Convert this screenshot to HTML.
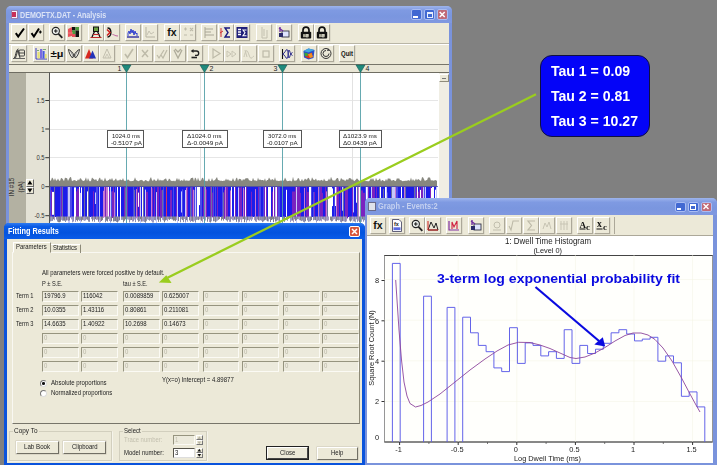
<!DOCTYPE html>
<html><head><meta charset="utf-8"><title>Fitting Results</title>
<style>
html,body{margin:0;padding:0;background:#808080;}
body{width:717px;height:465px;overflow:hidden;background:#808080;font-family:"Liberation Sans",sans-serif;font-size:8px;color:#000;position:relative;}
div,span{position:absolute;box-sizing:border-box;white-space:nowrap;}
svg{position:absolute;left:0;top:0;overflow:visible;}
svg text{font-family:"Liberation Sans",sans-serif;}
.tb{height:17px;width:16px;background:#ece9d8;border:1px solid;border-color:#fff #aca899 #aca899 #fff;font-size:9px;text-align:center;line-height:15px;overflow:hidden;box-shadow:0.5px 0.5px 0 #d0cdbd;}
.tb svg{left:0;top:0;width:14px;height:15px;}
.fld{height:11px;width:37px;background:#eceadc;border:1px solid;border-color:#96947f #fbfaf4 #fbfaf4 #96947f;font-size:7.4px;line-height:9px;padding-left:2px;color:#333;}
.fld.d{color:#b4b1a0;}
.btn{background:#ece9d8;border:1px solid;border-color:#fff #716f64 #716f64 #fff;font-size:7.4px;text-align:center;color:#111;box-shadow:0 0 0 0.5px #c9c6b5;}
.t{font-size:7.4px;color:#222;line-height:9px;}
.cb{background:#fff;border:1px solid #222;font-size:7.4px;line-height:8.2px;text-align:center;color:#222;padding-top:1px;}
.wb{width:10.5px;height:10.5px;border-radius:2px;border:1px solid #a9bcf2;}
</style></head><body><div id="root" style="left:0;top:0;width:735px;height:485px;overflow:hidden;filter:blur(0.4px);">
<div style="left:5.5px;top:5.9px;width:446.0px;height:240px;background:#7a93dc;border-radius:5px 5px 0 0;"></div><div style="left:5.5px;top:5.9px;width:446.0px;height:17px;background:linear-gradient(#9db4ec,#7f9ae2 25%,#7a96df 60%,#8098e0);border-radius:5px 5px 0 0;"></div><div style="left:10.8px;top:10.3px;width:7.5px;height:8.5px;background:#f4f2fa;border:1px solid #9a80b0;"></div><div style="left:12px;top:12px;width:3.5px;height:5px;background:#c83058;"></div><span style="left:19.8px;top:9.5px;font-size:9.2px;line-height:11.0px;font-weight:bold;color:#dbe3f6;transform-origin:0 50%;transform:scaleX(0.774);">DEMOFTX.DAT - Analysis</span><div class="wb" style="left:411px;top:9.2px;background:#4168d2;"></div><div class="wb" style="left:424px;top:9.2px;background:#4168d2;"></div><div class="wb" style="left:437px;top:9.2px;background:#c06a78;"></div><div style="left:413px;top:15.5px;width:4.5px;height:2px;background:#fff;"></div><div style="left:426.5px;top:11.5px;width:6px;height:6px;border:1px solid #e8eefc;border-top-width:2px;"></div><svg width="717" height="465"><path d="M439.7 12l5 5M444.7 12l-5 5" stroke="#fff" stroke-width="1.5"/></svg><div style="left:8.5px;top:22.5px;width:440.5px;height:223px;background:#ece9d8;"></div><div style="left:8.5px;top:42.6px;width:440.5px;height:1px;background:#b9b6a6;"></div><div style="left:8.5px;top:43.6px;width:440.5px;height:1px;background:#fff;"></div><div style="left:8.5px;top:63.5px;width:440.5px;height:1px;background:#77756a;"></div><div class="tb" style="left:11px;top:24px;width:16px;"><svg viewBox="0 0 14 15"><path d="M3.800 8.200l2.400 3.300L12 3.500" fill="none" stroke="#000" stroke-width="2"/></svg></div><div class="tb" style="left:28px;top:24px;width:16px;"><svg viewBox="0 0 14 15"><path d="M2.500 8.200l2.400 3.300L10 3.500" fill="none" stroke="#000" stroke-width="2"/><path d="M11.300 5.500v3M9.800 7h3" stroke="#000" stroke-width="1.200"/></svg></div><div class="tb" style="left:49px;top:24px;width:16px;"><svg viewBox="0 0 14 15"><circle cx="5.800" cy="6" r="3.600" fill="#f2f6f2" stroke="#222" stroke-width="1.100"/><path d="M8.500 8.800l3.800 4" stroke="#222" stroke-width="1.900"/><path d="M4 6h3.600M5.800 4.200v3.600" stroke="#111" stroke-width="1"/></svg></div><div class="tb" style="left:66px;top:24px;width:16px;"><svg viewBox="0 0 14 15"><path d="M1 4l4-2v9l-4 1z" fill="#e8505a"/><rect x="5" y="2" width="3.500" height="3.500" fill="#111"/><rect x="8.500" y="2" width="3.500" height="3.500" fill="#4a9a3a"/><rect x="5" y="5.500" width="3.500" height="3.500" fill="#4a9a3a"/><rect x="8.500" y="5.500" width="3.500" height="3.500" fill="#111"/><rect x="5" y="9" width="3.500" height="3" fill="#e8505a"/><rect x="8.500" y="9" width="3.500" height="3" fill="#111"/><path d="M1 8h5" stroke="#f08080" stroke-width="1"/></svg></div><div class="tb" style="left:87.5px;top:24px;width:16px;"><svg viewBox="0 0 14 15"><rect x="4.500" y="2" width="5" height="4.500" fill="#6aa040" stroke="#111" stroke-width="1"/><path d="M5.500 6.500L3 12M8.500 6.500L11 12" stroke="#111" stroke-width="1.300" fill="none"/><path d="M1.500 12.500h11M4 9.500h6" stroke="#c02828" stroke-width="1.200"/></svg></div><div class="tb" style="left:103.8px;top:24px;width:16px;"><svg viewBox="0 0 14 15"><path d="M2.500 3c4.500 0 4.500 9 0 9" fill="none" stroke="#111" stroke-width="1.400"/><path d="M2 4.500l3 3-3 3" fill="none" stroke="#d02020" stroke-width="1.500"/><path d="M7.500 9.500c2 0 2 1.500 5.500 1.500" stroke="#c060a0" stroke-width="1" fill="none"/></svg></div><div class="tb" style="left:125px;top:24px;width:16px;"><svg viewBox="0 0 14 15"><path d="M1 12h12" stroke="#2020a0" stroke-width="1.3"/><path d="M2 11V8l1-2 1 3 1-5 1 4 1-3 1 5 1-4 1 3 1-1v3" fill="none" stroke="#3040d0" stroke-width="1"/></svg></div><div class="tb" style="left:142px;top:24px;width:16px;"><svg viewBox="0 0 14 15"><path d="M3 2v10h9" stroke="#b5b2a2" stroke-width="1" fill="none"/><path d="M4 10l2-4 2 3 3-2" fill="none" stroke="#c5c2b2" stroke-width="1"/></svg></div><div class="tb" style="left:163.5px;top:24px;width:16px;"><svg viewBox="0 0 14 15"><text x="2.200" y="10.800" font-size="10" font-weight="bold" fill="#111" textLength="9.400" lengthAdjust="spacingAndGlyphs">fx</text></svg></div><div class="tb" style="left:180px;top:24px;width:16px;"><svg viewBox="0 0 14 15"><path d="M3 4h3M4.5 2.5v3M9 3l3 3M12 3l-3 3M3 10h3M9 10h3" stroke="#bebbaa" stroke-width="1.1"/></svg></div><div class="tb" style="left:201px;top:24px;width:16px;"><svg viewBox="0 0 14 15"><path d="M3 2v11M3 4h8M3 7h6M3 10h9" stroke="#a9a696" stroke-width="1"/></svg></div><div class="tb" style="left:218px;top:24px;width:16px;"><svg viewBox="0 0 14 15"><path d="M2 3v9" stroke="#d03030" stroke-width="1"/><path d="M11 3H6l3 4.5L6 12h5" fill="none" stroke="#1a1a80" stroke-width="1.4"/><path d="M1 8l3-2" stroke="#d03030" stroke-width="1"/></svg></div><div class="tb" style="left:234.3px;top:24px;width:16px;"><svg viewBox="0 0 14 15"><rect x="1.5" y="2" width="11" height="11" fill="#20207a"/><path d="M3 4.500h3M3 7h3M3 9.500h3" stroke="#fff" stroke-width="1.4"/><path d="M11.5 5H8l2 2.800L8 10.800h3.500" fill="none" stroke="#fff" stroke-width="1.1"/></svg></div><div class="tb" style="left:255.5px;top:24px;width:16px;"><svg viewBox="0 0 14 15"><path d="M5 2v11h5V5M7 4v7" stroke="#c2bfae" stroke-width="1" fill="none"/></svg></div><div class="tb" style="left:276.3px;top:24px;width:16px;"><svg viewBox="0 0 14 15"><rect x="5" y="6" width="7" height="6" fill="#dfe4ff" stroke="#334" stroke-width="0.9"/><path d="M2 3l4 3M3 2v5" stroke="#7030a0" stroke-width="1.4"/><rect x="2" y="8" width="4" height="4" fill="#2a2a6a"/></svg></div><div class="tb" style="left:297.5px;top:24px;width:16px;"><svg viewBox="0 0 14 15"><path d="M4 7V5.2a3 3 0 016 0V7" fill="none" stroke="#111" stroke-width="1.7"/><rect x="1.8" y="6.8" width="10.4" height="6.8" rx="1" fill="#111"/><rect x="4" y="9" width="6" height="3.2" fill="#8a8878"/><path d="M5 9.5v2.4M7 9.5h2v1.2h-2v1.2h2" stroke="#e8e6d8" stroke-width="0.7" fill="none"/></svg></div><div class="tb" style="left:314.3px;top:24px;width:16px;"><svg viewBox="0 0 14 15"><path d="M4 7V5.2a3 3 0 016 0V7" fill="none" stroke="#111" stroke-width="1.7"/><rect x="1.8" y="6.8" width="10.4" height="6.8" rx="1" fill="#111"/><rect x="4" y="9" width="6" height="3.2" fill="#8a8878"/><path d="M5 9.5v2.4M7 9.5h2v1.2h-2v1.2h2" stroke="#e8e6d8" stroke-width="0.7" fill="none"/></svg></div><div class="tb" style="left:11px;top:45px;width:16px;"><svg viewBox="0 0 14 15"><path d="M1.500 12.500c2.500 0 2-9.500 5-9.500" fill="none" stroke="#333" stroke-width="1"/><path d="M1 12.500h12" stroke="#555" stroke-width="0.900"/><rect x="7" y="4" width="5.500" height="6" rx="1" fill="none" stroke="#333" stroke-width="0.900"/><path d="M7 7h5" stroke="#333" stroke-width="0.900"/><path d="M3.500 12l2.500-8 2 8" fill="none" stroke="#333" stroke-width="0.900"/></svg></div><div class="tb" style="left:32.7px;top:45px;width:16px;"><svg viewBox="0 0 14 15"><path d="M2 2v11h11" fill="none" stroke="#3a3ac0" stroke-width="1"/><rect x="3.500" y="6" width="2.200" height="6.500" fill="#e4e070"/><rect x="6" y="3" width="2.400" height="9.500" fill="#7a6ae0"/><rect x="8.600" y="5" width="2" height="7.500" fill="#4a5ae0"/><rect x="10.800" y="8" width="1.800" height="4.500" fill="#e4e070"/><path d="M3 4.500h2M9 3.500h3" stroke="#5a9a5a" stroke-width="0.800"/></svg></div><div class="tb" style="left:49px;top:45px;width:16px;"><svg viewBox="0 0 14 15"><text x="0.5" y="10.5" font-size="9.5" font-weight="bold" fill="#111" textLength="13" lengthAdjust="spacingAndGlyphs">±µ</text></svg></div><div class="tb" style="left:66px;top:45px;width:16px;"><svg viewBox="0 0 14 15"><path d="M1.500 3.500c2 .5 4 3 5.500 5.500 1.500-2.500 3.500-5 5.500-5.500-.5 3-1.500 6-4 8.500L7 9l-1.500 3C3 9.500 2 6.500 1.500 3.500z" fill="#f6f6ee" stroke="#222" stroke-width="0.900"/><path d="M3.500 5l3 6M10.500 5l-3 6" stroke="#444" stroke-width="0.600"/></svg></div><div class="tb" style="left:82.5px;top:45px;width:16px;"><svg viewBox="0 0 14 15"><path d="M1 12.500l4-9.500 4 9.500z" fill="#d82a20"/><path d="M5 12.500l3.500-8 3.500 8z" fill="#2232b8"/></svg></div><div class="tb" style="left:99px;top:45px;width:16px;"><svg viewBox="0 0 14 15"><path d="M3 12l4-9 4 9z" fill="none" stroke="#c2bfae" stroke-width="1"/><path d="M5 12l2-4 2 4" fill="none" stroke="#c2bfae" stroke-width="0.8"/></svg></div><div class="tb" style="left:120.5px;top:45px;width:16px;"><svg viewBox="0 0 14 15"><path d="M3 8l2.5 3.5L11 3" fill="none" stroke="#bdbaa8" stroke-width="1.6"/></svg></div><div class="tb" style="left:137px;top:45px;width:16px;"><svg viewBox="0 0 14 15"><path d="M4 4l6 7M10 4l-6 7" fill="none" stroke="#bdbaa8" stroke-width="1.4"/></svg></div><div class="tb" style="left:153.5px;top:45px;width:16px;"><svg viewBox="0 0 14 15"><path d="M2 9l2 3 5-8M6 9l2 3 4-8" fill="none" stroke="#bdbaa8" stroke-width="1.2"/></svg></div><div class="tb" style="left:170px;top:45px;width:16px;"><svg viewBox="0 0 14 15"><path d="M3 4l4 8 4-8M4 3l3 3 3-3" fill="none" stroke="#aeab9a" stroke-width="1.3"/></svg></div><div class="tb" style="left:187px;top:45px;width:16px;"><svg viewBox="0 0 14 15"><path d="M5 5h3.500a2.200 2.200 0 010 4.400H7" fill="none" stroke="#222" stroke-width="1.3"/><path d="M3.500 11.500h5.500" stroke="#222" stroke-width="1.600"/><path d="M5.500 3l-2.800 2 2.800 2z" fill="#222"/></svg></div><div class="tb" style="left:207.5px;top:45px;width:16px;"><svg viewBox="0 0 14 15"><path d="M4 3l7 4.5L4 12z" fill="none" stroke="#bdbaa8" stroke-width="1.2"/></svg></div><div class="tb" style="left:224px;top:45px;width:16px;"><svg viewBox="0 0 14 15"><path d="M2 5l4 3-4 3zM7 5l4 3-4 3z" fill="none" stroke="#c8c5b4" stroke-width="1"/></svg></div><div class="tb" style="left:241.2px;top:45px;width:16px;"><svg viewBox="0 0 14 15"><path d="M2 11c2-8 3-8 5-2s3 2 5 1M3 4l2 7" fill="none" stroke="#c8c5b4" stroke-width="1"/></svg></div><div class="tb" style="left:258px;top:45px;width:16px;"><svg viewBox="0 0 14 15"><rect x="4" y="5" width="6" height="6" fill="none" stroke="#bdbaa8" stroke-width="1.2"/></svg></div><div class="tb" style="left:279.4px;top:45px;width:16px;"><svg viewBox="0 0 14 15"><path d="M2.5 3v10" stroke="#111" stroke-width="1.1"/><path d="M2.5 8c3-1 3-4.5 4.5-4.5S8 12 9 12s1-5 3.5-5.5M2.5 8c3 1 3 4.500 4.500 4.500S8 4 9 4s1 5 3.500 5.500" fill="none" stroke="#28288a" stroke-width="1"/></svg></div><div class="tb" style="left:300.5px;top:45px;width:16px;"><svg viewBox="0 0 14 15"><path d="M1.5 5l5-2.5 6 1.5-1 8-5 1.5-4.5-2z" fill="#2a50c8"/><path d="M1.5 5l5 1.5 6-2.5-6-1.5z" fill="#40a8e0"/><path d="M3 7l4 1 3-1.5.5 4.5-3.5 1.5-3.5-1.5z" fill="#e03020"/><path d="M6 8.2l3.5-1.2 1.5 4-3 1z" fill="#f09020"/><path d="M2.5 6.5l3.5 1-.5 3-3-1z" fill="#38a838"/></svg></div><div class="tb" style="left:317.5px;top:45px;width:16px;"><svg viewBox="0 0 14 15"><circle cx="7" cy="7.5" r="5" fill="none" stroke="#333" stroke-width="1"/><path d="M7 4.5a3 3 0 103 3" fill="none" stroke="#333" stroke-width="1"/><path d="M9 2.5l2 2-3 .5z" fill="#333"/></svg></div><div class="tb" style="left:339px;top:45px;width:16px;"><svg viewBox="0 0 14 15"><text x="1" y="10" font-size="7" font-weight="bold" fill="#111" textLength="12" lengthAdjust="spacingAndGlyphs">Quit</text></svg></div><div style="left:8.5px;top:64.5px;width:440.5px;height:8px;background:#e9e6d6;border-bottom:1px solid #6f6d62;"></div><div style="left:8.5px;top:72.5px;width:17.3px;height:173px;background:#b3b1a2;"></div><div style="left:25.8px;top:72.5px;width:23.2px;height:173px;background:#e4e2d5;"></div><div style="left:49px;top:72.5px;width:389.5px;height:173px;background:#fff;"></div><div style="left:438.5px;top:72.5px;width:10.5px;height:173px;background:#f0eee4;"></div><div style="left:439.0px;top:74px;width:9.5px;height:8px;background:#ece9d8;border:1px solid;border-color:#fff #8f8c7c #8f8c7c #fff;"></div><div style="left:441.5px;top:77.5px;width:4px;height:1px;background:#777;"></div><svg width="717" height="465" shape-rendering="crispEdges"><path d="M49 100.5H438" stroke="#e6e6e6" stroke-width="1"/><path d="M49 129H438" stroke="#e6e6e6" stroke-width="1"/><path d="M49 157.5H438" stroke="#e6e6e6" stroke-width="1"/><path d="M200.5 72.5V224" stroke="#e2e2e2" stroke-width="1"/><path d="M352.5 72.5V224" stroke="#e2e2e2" stroke-width="1"/></svg><svg width="717" height="465" style="filter:blur(0.5px)"><rect x="50" y="187" width="387" height="30" fill="#1c1cea"/><rect x="50" y="187.0" width="1" height="30.9" fill="#4a4ae8"/><rect x="51" y="190.1" width="1" height="28.2" fill="#7a22c0"/><rect x="52" y="191.9" width="2" height="22.9" fill="#ffffff"/><rect x="54" y="187.0" width="1" height="30.3" fill="#6c6ca4"/><rect x="60" y="187.0" width="1" height="31.3" fill="#4a4ae8"/><rect x="61" y="187.0" width="1" height="30.6" fill="#7a22c0"/><rect x="62" y="187.0" width="1" height="31.4" fill="#6c6ca4"/><rect x="67" y="187.0" width="1" height="31.9" fill="#4a4ae8"/><rect x="68" y="187.0" width="2" height="36.0" fill="#c8c8fa"/><rect x="70" y="187.0" width="2" height="30.5" fill="#4a4ae8"/><rect x="74" y="187.4" width="2" height="35.6" fill="#ffffff"/><rect x="76" y="191.4" width="1" height="25.9" fill="#7a22c0"/><rect x="77" y="188.6" width="2" height="30.3" fill="#7a22c0"/><rect x="79" y="187.0" width="1" height="36.0" fill="#ffffff"/><rect x="80" y="192.9" width="1" height="30.1" fill="#c8c8fa"/><rect x="81" y="187.4" width="1" height="35.6" fill="#ffffff"/><rect x="84" y="187.0" width="1" height="31.7" fill="#6c6ca4"/><rect x="87" y="191.4" width="1" height="31.6" fill="#ffffff"/><rect x="88" y="187.0" width="1" height="30.8" fill="#6c6ca4"/><rect x="93" y="191.3" width="1" height="25.8" fill="#7a22c0"/><rect x="95" y="192.5" width="1" height="11.5" fill="#c8c8fa"/><rect x="96" y="187.0" width="2" height="31.1" fill="#4a4ae8"/><rect x="99" y="187.0" width="1" height="36.0" fill="#c8c8fa"/><rect x="103" y="190.8" width="1" height="27.1" fill="#c77ad0"/><rect x="104" y="187.0" width="1" height="30.2" fill="#c77ad0"/><rect x="105" y="187.0" width="1" height="31.5" fill="#7a22c0"/><rect x="106" y="187.0" width="1" height="30.7" fill="#c77ad0"/><rect x="107" y="187.0" width="1" height="30.8" fill="#c77ad0"/><rect x="108" y="187.0" width="1" height="36.0" fill="#ffffff"/><rect x="109" y="190.8" width="1" height="28.2" fill="#7a22c0"/><rect x="110" y="187.0" width="1" height="36.0" fill="#c8c8fa"/><rect x="111" y="191.5" width="1" height="25.6" fill="#4a4ae8"/><rect x="112" y="191.2" width="1" height="26.8" fill="#7a22c0"/><rect x="113" y="187.1" width="1" height="30.5" fill="#7a22c0"/><rect x="114" y="192.4" width="1" height="25.9" fill="#c77ad0"/><rect x="115" y="187.0" width="1" height="31.3" fill="#4a4ae8"/><rect x="117" y="187.0" width="1" height="36.0" fill="#ffffff"/><rect x="120" y="187.0" width="1" height="36.0" fill="#ffffff"/><rect x="124" y="187.0" width="1" height="31.7" fill="#7a22c0"/><rect x="125" y="187.2" width="1" height="31.6" fill="#6c6ca4"/><rect x="127" y="187.0" width="1" height="30.0" fill="#7a22c0"/><rect x="133" y="187.0" width="1" height="31.6" fill="#4a4ae8"/><rect x="134" y="189.9" width="1" height="27.5" fill="#6c6ca4"/><rect x="136" y="189.1" width="1" height="29.3" fill="#c77ad0"/><rect x="137" y="187.0" width="1" height="30.8" fill="#7a22c0"/><rect x="138" y="192.6" width="1" height="14.2" fill="#ffffff"/><rect x="139" y="187.0" width="1" height="31.1" fill="#7a22c0"/><rect x="140" y="187.0" width="1" height="36.0" fill="#c8c8fa"/><rect x="142" y="187.0" width="1" height="36.0" fill="#ffffff"/><rect x="143" y="187.0" width="1" height="31.6" fill="#6c6ca4"/><rect x="145" y="189.6" width="1" height="33.4" fill="#c8c8fa"/><rect x="146" y="191.8" width="2" height="25.5" fill="#7a22c0"/><rect x="151" y="187.0" width="1" height="31.9" fill="#c77ad0"/><rect x="152" y="188.3" width="1" height="29.7" fill="#7a22c0"/><rect x="154" y="187.0" width="1" height="31.1" fill="#7a22c0"/><rect x="156" y="192.1" width="1" height="30.9" fill="#c8c8fa"/><rect x="157" y="187.0" width="2" height="31.2" fill="#7a22c0"/><rect x="160" y="187.0" width="1" height="31.1" fill="#7a22c0"/><rect x="161" y="190.2" width="1" height="27.6" fill="#7a22c0"/><rect x="162" y="189.8" width="1" height="27.4" fill="#6c6ca4"/><rect x="163" y="187.0" width="1" height="31.0" fill="#4a4ae8"/><rect x="166" y="187.0" width="1" height="30.0" fill="#d83060"/><rect x="170" y="190.1" width="2" height="27.4" fill="#7a22c0"/><rect x="173" y="187.0" width="1" height="31.1" fill="#4a4ae8"/><rect x="176" y="187.0" width="1" height="31.2" fill="#7a22c0"/><rect x="177" y="187.0" width="1" height="36.0" fill="#c8c8fa"/><rect x="181" y="191.4" width="1" height="21.1" fill="#c8c8fa"/><rect x="182" y="189.4" width="1" height="29.0" fill="#4a4ae8"/><rect x="185" y="190.0" width="1" height="33.0" fill="#c8c8fa"/><rect x="186" y="187.6" width="1" height="29.4" fill="#c77ad0"/><rect x="187" y="187.0" width="1" height="30.3" fill="#7a22c0"/><rect x="190" y="187.4" width="1" height="31.5" fill="#6c6ca4"/><rect x="191" y="187.0" width="1" height="30.9" fill="#4a4ae8"/><rect x="192" y="187.0" width="1" height="30.0" fill="#7a22c0"/><rect x="193" y="189.7" width="1" height="28.8" fill="#c77ad0"/><rect x="194" y="190.1" width="1" height="27.0" fill="#4a4ae8"/><rect x="195" y="187.0" width="1" height="36.0" fill="#c8c8fa"/><rect x="196" y="187.0" width="1" height="32.0" fill="#4a4ae8"/><rect x="197" y="187.0" width="1" height="36.0" fill="#ffffff"/><rect x="198" y="187.0" width="1" height="36.0" fill="#ffffff"/><rect x="199" y="187.0" width="1" height="18.1" fill="#ffffff"/><rect x="200" y="187.0" width="2" height="31.2" fill="#4a4ae8"/><rect x="203" y="187.0" width="1" height="31.1" fill="#7a22c0"/><rect x="204" y="187.0" width="1" height="31.3" fill="#7a22c0"/><rect x="205" y="187.0" width="1" height="30.0" fill="#c77ad0"/><rect x="206" y="189.4" width="1" height="27.7" fill="#7a22c0"/><rect x="210" y="187.0" width="1" height="31.1" fill="#7a22c0"/><rect x="211" y="187.0" width="1" height="30.2" fill="#6c6ca4"/><rect x="212" y="192.6" width="1" height="24.7" fill="#7a22c0"/><rect x="213" y="187.0" width="1" height="31.2" fill="#4a4ae8"/><rect x="215" y="187.0" width="1" height="30.7" fill="#4a4ae8"/><rect x="217" y="187.0" width="1" height="30.6" fill="#7a22c0"/><rect x="222" y="187.0" width="1" height="30.1" fill="#4a4ae8"/><rect x="223" y="192.4" width="1" height="25.4" fill="#6c6ca4"/><rect x="224" y="190.1" width="1" height="28.7" fill="#7a22c0"/><rect x="225" y="187.0" width="1" height="31.6" fill="#c77ad0"/><rect x="226" y="187.0" width="2" height="30.4" fill="#7a22c0"/><rect x="230" y="190.5" width="1" height="27.3" fill="#c77ad0"/><rect x="231" y="187.0" width="1" height="36.0" fill="#ffffff"/><rect x="234" y="187.0" width="1" height="36.0" fill="#ffffff"/><rect x="235" y="187.0" width="1" height="31.5" fill="#7a22c0"/><rect x="238" y="187.4" width="1" height="35.6" fill="#c8c8fa"/><rect x="239" y="187.5" width="2" height="30.8" fill="#7a22c0"/><rect x="241" y="187.0" width="1" height="31.0" fill="#7a22c0"/><rect x="243" y="187.7" width="1" height="30.9" fill="#c77ad0"/><rect x="244" y="189.5" width="1" height="28.0" fill="#7a22c0"/><rect x="245" y="187.0" width="1" height="36.0" fill="#ffffff"/><rect x="246" y="187.0" width="1" height="30.9" fill="#7a22c0"/><rect x="251" y="191.7" width="1" height="25.5" fill="#7a22c0"/><rect x="255" y="189.1" width="1" height="29.3" fill="#c77ad0"/><rect x="258" y="187.0" width="1" height="31.8" fill="#7a22c0"/><rect x="259" y="187.0" width="1" height="30.6" fill="#4a4ae8"/><rect x="260" y="187.0" width="1" height="30.5" fill="#4a4ae8"/><rect x="263" y="187.0" width="1" height="31.6" fill="#4a4ae8"/><rect x="264" y="187.0" width="1" height="30.4" fill="#7a22c0"/><rect x="265" y="187.1" width="1" height="35.9" fill="#ffffff"/><rect x="266" y="187.0" width="1" height="31.6" fill="#7a22c0"/><rect x="268" y="187.0" width="3" height="36.0" fill="#ffffff"/><rect x="272" y="191.6" width="1" height="26.5" fill="#7a22c0"/><rect x="273" y="187.0" width="1" height="36.0" fill="#ffffff"/><rect x="274" y="187.0" width="1" height="31.4" fill="#7a22c0"/><rect x="275" y="187.0" width="1" height="36.0" fill="#c8c8fa"/><rect x="276" y="187.0" width="1" height="36.0" fill="#ffffff"/><rect x="277" y="187.0" width="1" height="30.8" fill="#7a22c0"/><rect x="278" y="187.0" width="2" height="30.8" fill="#4a4ae8"/><rect x="286" y="189.8" width="1" height="33.2" fill="#ffffff"/><rect x="292" y="191.5" width="3" height="26.1" fill="#7a22c0"/><rect x="295" y="187.0" width="1" height="30.5" fill="#7a22c0"/><rect x="296" y="187.0" width="1" height="36.0" fill="#c8c8fa"/><rect x="297" y="187.0" width="3" height="30.8" fill="#7a22c0"/><rect x="300" y="192.9" width="1" height="25.4" fill="#7a22c0"/><rect x="304" y="187.9" width="1" height="29.7" fill="#c77ad0"/><rect x="306" y="187.0" width="1" height="30.5" fill="#7a22c0"/><rect x="307" y="191.9" width="2" height="26.8" fill="#7a22c0"/><rect x="309" y="187.0" width="2" height="36.0" fill="#ffffff"/><rect x="311" y="187.0" width="1" height="31.7" fill="#4a4ae8"/><rect x="313" y="192.0" width="1" height="25.5" fill="#4a4ae8"/><rect x="314" y="192.0" width="1" height="25.6" fill="#7a22c0"/><rect x="318" y="187.0" width="1" height="30.2" fill="#c77ad0"/><rect x="319" y="187.0" width="1" height="31.7" fill="#4a4ae8"/><rect x="320" y="187.0" width="2" height="30.5" fill="#7a22c0"/><rect x="322" y="192.9" width="1" height="25.6" fill="#7a22c0"/><rect x="325" y="187.0" width="1" height="30.8" fill="#7a22c0"/><rect x="326" y="191.4" width="1" height="26.3" fill="#c77ad0"/><rect x="327" y="187.0" width="1" height="30.7" fill="#6c6ca4"/><rect x="328" y="187.0" width="4" height="36.0" fill="#ffffff"/><rect x="332" y="188.4" width="1" height="17.7" fill="#ffffff"/><rect x="334" y="187.0" width="1" height="31.5" fill="#4a4ae8"/><rect x="335" y="187.0" width="1" height="19.0" fill="#ffffff"/><rect x="336" y="187.0" width="1" height="31.3" fill="#c77ad0"/><rect x="337" y="187.0" width="2" height="31.3" fill="#7a22c0"/><rect x="340" y="187.0" width="1" height="31.2" fill="#7a22c0"/><rect x="342" y="187.0" width="1" height="23.7" fill="#c8c8fa"/><rect x="343" y="187.0" width="1" height="31.7" fill="#6c6ca4"/><rect x="345" y="187.0" width="3" height="31.4" fill="#7a22c0"/><rect x="352" y="187.0" width="1" height="30.5" fill="#7a22c0"/><rect x="353" y="187.0" width="1" height="25.4" fill="#c8c8fa"/><rect x="356" y="187.0" width="1" height="15.7" fill="#ffffff"/><rect x="357" y="187.0" width="1" height="30.6" fill="#6c6ca4"/><rect x="358" y="187.0" width="1" height="31.2" fill="#c77ad0"/><rect x="359" y="187.0" width="2" height="36.0" fill="#ffffff"/><rect x="361" y="190.4" width="2" height="27.3" fill="#7a22c0"/><rect x="363" y="192.8" width="2" height="25.4" fill="#7a22c0"/><rect x="365" y="187.0" width="1" height="31.4" fill="#4a4ae8"/><rect x="366" y="187.0" width="1" height="36.0" fill="#ffffff"/><rect x="367" y="187.0" width="1" height="36.0" fill="#c8c8fa"/><rect x="368" y="187.0" width="1" height="31.8" fill="#7a22c0"/><rect x="371" y="187.0" width="1" height="36.0" fill="#c8c8fa"/><rect x="372" y="187.0" width="3" height="30.8" fill="#7a22c0"/><rect x="376" y="187.0" width="1" height="30.8" fill="#7a22c0"/><rect x="379" y="187.0" width="1" height="30.8" fill="#6c6ca4"/><rect x="380" y="187.0" width="1" height="36.0" fill="#ffffff"/><rect x="383" y="188.8" width="1" height="28.9" fill="#6c6ca4"/><rect x="385" y="187.0" width="1" height="13.5" fill="#ffffff"/><rect x="386" y="187.0" width="1" height="36.0" fill="#c8c8fa"/><rect x="387" y="192.5" width="1" height="26.3" fill="#4a4ae8"/><rect x="391" y="187.0" width="1" height="30.4" fill="#6c6ca4"/><rect x="392" y="187.0" width="3" height="36.0" fill="#c8c8fa"/><rect x="395" y="187.0" width="1" height="31.9" fill="#c77ad0"/><rect x="396" y="187.0" width="2" height="31.4" fill="#4a4ae8"/><rect x="401" y="187.0" width="1" height="36.0" fill="#ffffff"/><rect x="404" y="187.0" width="1" height="30.2" fill="#c77ad0"/><rect x="405" y="187.0" width="1" height="31.1" fill="#6c6ca4"/><rect x="414" y="187.0" width="1" height="31.5" fill="#6c6ca4"/><rect x="415" y="187.0" width="1" height="30.4" fill="#4a4ae8"/><rect x="416" y="187.0" width="1" height="31.3" fill="#7a22c0"/><rect x="417" y="187.0" width="1" height="36.0" fill="#ffffff"/><rect x="418" y="191.7" width="1" height="25.7" fill="#7a22c0"/><rect x="419" y="187.0" width="1" height="31.5" fill="#7a22c0"/><rect x="420" y="189.9" width="1" height="33.1" fill="#ffffff"/><rect x="421" y="187.0" width="2" height="31.1" fill="#7a22c0"/><rect x="423" y="187.1" width="1" height="35.9" fill="#c8c8fa"/><rect x="424" y="187.0" width="1" height="30.1" fill="#4a4ae8"/><rect x="425" y="187.0" width="1" height="36.0" fill="#c8c8fa"/><rect x="430" y="187.0" width="1" height="30.2" fill="#7a22c0"/><rect x="431" y="188.0" width="1" height="35.0" fill="#ffffff"/><rect x="432" y="187.0" width="2" height="36.0" fill="#ffffff"/><rect x="435" y="189.7" width="1" height="13.9" fill="#ffffff"/><rect x="436" y="187.0" width="1" height="36.0" fill="#c8c8fa"/><rect x="50" y="216.5" width="1" height="4.9" fill="#8c8ca8"/><rect x="51" y="216.5" width="1" height="4.6" fill="#9c9cc4"/><rect x="52" y="216.5" width="1" height="4.4" fill="#8c8ca8"/><rect x="53" y="216.5" width="1" height="2.8" fill="#7c7c8c"/><rect x="54" y="216.5" width="1" height="3.7" fill="#a898c0"/><rect x="56" y="216.5" width="1" height="3.1" fill="#8c8ca8"/><rect x="57" y="216.5" width="1" height="5.1" fill="#8c8ca8"/><rect x="58" y="216.5" width="1" height="5.7" fill="#84848c"/><rect x="59" y="216.5" width="1" height="5.8" fill="#7c7c8c"/><rect x="60" y="216.5" width="1" height="5.2" fill="#7c7c8c"/><rect x="61" y="216.5" width="1" height="3.4" fill="#a898c0"/><rect x="62" y="216.5" width="1" height="4.2" fill="#9090b4"/><rect x="63" y="216.5" width="1" height="4.1" fill="#84848c"/><rect x="64" y="216.5" width="1" height="4.2" fill="#7c7c8c"/><rect x="65" y="216.5" width="1" height="5.5" fill="#9090b4"/><rect x="66" y="216.5" width="1" height="4.0" fill="#7c7c8c"/><rect x="67" y="216.5" width="1" height="3.8" fill="#a898c0"/><rect x="68" y="216.5" width="1" height="4.3" fill="#8c8ca8"/><rect x="69" y="216.5" width="1" height="3.9" fill="#84848c"/><rect x="71" y="216.5" width="1" height="2.9" fill="#a898c0"/><rect x="72" y="216.5" width="1" height="5.8" fill="#9c9cc4"/><rect x="73" y="216.5" width="1" height="5.0" fill="#9090b4"/><rect x="75" y="216.5" width="1" height="5.4" fill="#a898c0"/><rect x="76" y="216.5" width="1" height="3.6" fill="#7c7c8c"/><rect x="77" y="216.5" width="1" height="4.8" fill="#84848c"/><rect x="78" y="216.5" width="1" height="3.3" fill="#84848c"/><rect x="79" y="216.5" width="1" height="4.3" fill="#9090b4"/><rect x="80" y="216.5" width="1" height="3.6" fill="#9090b4"/><rect x="81" y="216.5" width="1" height="4.9" fill="#84848c"/><rect x="82" y="216.5" width="1" height="3.4" fill="#84848c"/><rect x="83" y="216.5" width="1" height="3.8" fill="#9c9cc4"/><rect x="84" y="216.5" width="1" height="4.4" fill="#a898c0"/><rect x="85" y="216.5" width="1" height="3.9" fill="#9090b4"/><rect x="86" y="216.5" width="1" height="2.9" fill="#9090b4"/><rect x="87" y="216.5" width="1" height="3.3" fill="#84848c"/><rect x="88" y="216.5" width="1" height="5.1" fill="#8c8ca8"/><rect x="89" y="216.5" width="1" height="5.3" fill="#8c8ca8"/><rect x="91" y="216.5" width="1" height="2.7" fill="#9c9cc4"/><rect x="92" y="216.5" width="1" height="4.9" fill="#84848c"/><rect x="93" y="216.5" width="1" height="3.3" fill="#a898c0"/><rect x="94" y="216.5" width="1" height="5.3" fill="#8c8ca8"/><rect x="95" y="216.5" width="1" height="2.7" fill="#7c7c8c"/><rect x="96" y="216.5" width="1" height="3.5" fill="#a898c0"/><rect x="97" y="216.5" width="1" height="3.1" fill="#9090b4"/><rect x="98" y="216.5" width="1" height="5.2" fill="#7c7c8c"/><rect x="99" y="216.5" width="1" height="3.3" fill="#9c9cc4"/><rect x="100" y="216.5" width="1" height="5.7" fill="#a898c0"/><rect x="101" y="216.5" width="1" height="4.5" fill="#7c7c8c"/><rect x="102" y="216.5" width="1" height="3.6" fill="#84848c"/><rect x="105" y="216.5" width="1" height="5.7" fill="#8c8ca8"/><rect x="106" y="216.5" width="1" height="4.2" fill="#7c7c8c"/><rect x="107" y="216.5" width="1" height="5.0" fill="#7c7c8c"/><rect x="108" y="216.5" width="1" height="2.6" fill="#8c8ca8"/><rect x="109" y="216.5" width="1" height="4.5" fill="#a898c0"/><rect x="110" y="216.5" width="1" height="5.6" fill="#9c9cc4"/><rect x="111" y="216.5" width="1" height="4.7" fill="#7c7c8c"/><rect x="113" y="216.5" width="1" height="5.0" fill="#84848c"/><rect x="114" y="216.5" width="1" height="4.7" fill="#8c8ca8"/><rect x="115" y="216.5" width="1" height="4.6" fill="#7c7c8c"/><rect x="116" y="216.5" width="1" height="5.4" fill="#8c8ca8"/><rect x="117" y="216.5" width="1" height="5.9" fill="#7c7c8c"/><rect x="118" y="216.5" width="1" height="4.9" fill="#9090b4"/><rect x="119" y="216.5" width="1" height="3.8" fill="#7c7c8c"/><rect x="121" y="216.5" width="1" height="3.4" fill="#9090b4"/><rect x="122" y="216.5" width="1" height="3.3" fill="#9090b4"/><rect x="123" y="216.5" width="1" height="5.9" fill="#84848c"/><rect x="124" y="216.5" width="1" height="4.2" fill="#84848c"/><rect x="125" y="216.5" width="1" height="2.8" fill="#84848c"/><rect x="126" y="216.5" width="1" height="5.9" fill="#9c9cc4"/><rect x="127" y="216.5" width="1" height="2.9" fill="#a898c0"/><rect x="128" y="216.5" width="1" height="3.2" fill="#9c9cc4"/><rect x="129" y="216.5" width="1" height="5.9" fill="#9090b4"/><rect x="130" y="216.5" width="1" height="3.7" fill="#9090b4"/><rect x="131" y="216.5" width="1" height="3.5" fill="#84848c"/><rect x="132" y="216.5" width="1" height="5.1" fill="#a898c0"/><rect x="133" y="216.5" width="1" height="4.8" fill="#9090b4"/><rect x="134" y="216.5" width="1" height="3.1" fill="#9c9cc4"/><rect x="135" y="216.5" width="1" height="5.6" fill="#9090b4"/><rect x="137" y="216.5" width="1" height="3.6" fill="#9c9cc4"/><rect x="138" y="216.5" width="1" height="5.2" fill="#84848c"/><rect x="139" y="216.5" width="1" height="4.7" fill="#9090b4"/><rect x="140" y="216.5" width="1" height="2.7" fill="#7c7c8c"/><rect x="141" y="216.5" width="1" height="5.1" fill="#84848c"/><rect x="142" y="216.5" width="1" height="5.0" fill="#a898c0"/><rect x="143" y="216.5" width="1" height="4.9" fill="#9c9cc4"/><rect x="144" y="216.5" width="1" height="5.4" fill="#9090b4"/><rect x="145" y="216.5" width="1" height="5.9" fill="#84848c"/><rect x="146" y="216.5" width="1" height="4.7" fill="#9090b4"/><rect x="147" y="216.5" width="1" height="2.9" fill="#9090b4"/><rect x="148" y="216.5" width="1" height="3.5" fill="#9c9cc4"/><rect x="149" y="216.5" width="1" height="4.2" fill="#8c8ca8"/><rect x="150" y="216.5" width="1" height="3.4" fill="#9090b4"/><rect x="151" y="216.5" width="1" height="4.7" fill="#a898c0"/><rect x="152" y="216.5" width="1" height="6.0" fill="#9c9cc4"/><rect x="153" y="216.5" width="1" height="6.0" fill="#9c9cc4"/><rect x="154" y="216.5" width="1" height="3.5" fill="#9090b4"/><rect x="155" y="216.5" width="1" height="3.9" fill="#8c8ca8"/><rect x="157" y="216.5" width="1" height="3.1" fill="#7c7c8c"/><rect x="158" y="216.5" width="1" height="5.3" fill="#7c7c8c"/><rect x="159" y="216.5" width="1" height="3.3" fill="#a898c0"/><rect x="160" y="216.5" width="1" height="5.2" fill="#7c7c8c"/><rect x="162" y="216.5" width="1" height="3.3" fill="#9c9cc4"/><rect x="163" y="216.5" width="1" height="4.0" fill="#9090b4"/><rect x="164" y="216.5" width="1" height="5.8" fill="#84848c"/><rect x="165" y="216.5" width="1" height="4.0" fill="#7c7c8c"/><rect x="166" y="216.5" width="1" height="3.4" fill="#8c8ca8"/><rect x="167" y="216.5" width="1" height="4.7" fill="#a898c0"/><rect x="168" y="216.5" width="1" height="2.8" fill="#9090b4"/><rect x="169" y="216.5" width="1" height="3.4" fill="#84848c"/><rect x="170" y="216.5" width="1" height="2.5" fill="#8c8ca8"/><rect x="171" y="216.5" width="1" height="2.8" fill="#9c9cc4"/><rect x="172" y="216.5" width="1" height="3.0" fill="#7c7c8c"/><rect x="173" y="216.5" width="1" height="4.2" fill="#7c7c8c"/><rect x="174" y="216.5" width="1" height="3.9" fill="#84848c"/><rect x="175" y="216.5" width="1" height="4.7" fill="#84848c"/><rect x="176" y="216.5" width="1" height="3.5" fill="#a898c0"/><rect x="178" y="216.5" width="1" height="4.5" fill="#7c7c8c"/><rect x="180" y="216.5" width="1" height="5.8" fill="#8c8ca8"/><rect x="181" y="216.5" width="1" height="2.8" fill="#9c9cc4"/><rect x="182" y="216.5" width="1" height="3.6" fill="#84848c"/><rect x="183" y="216.5" width="1" height="5.6" fill="#8c8ca8"/><rect x="184" y="216.5" width="1" height="2.5" fill="#a898c0"/><rect x="185" y="216.5" width="1" height="5.3" fill="#9090b4"/><rect x="186" y="216.5" width="1" height="3.6" fill="#7c7c8c"/><rect x="187" y="216.5" width="1" height="5.2" fill="#9c9cc4"/><rect x="189" y="216.5" width="1" height="3.9" fill="#7c7c8c"/><rect x="190" y="216.5" width="1" height="5.6" fill="#a898c0"/><rect x="191" y="216.5" width="1" height="4.5" fill="#8c8ca8"/><rect x="192" y="216.5" width="1" height="5.0" fill="#7c7c8c"/><rect x="193" y="216.5" width="1" height="5.3" fill="#a898c0"/><rect x="194" y="216.5" width="1" height="4.1" fill="#9c9cc4"/><rect x="195" y="216.5" width="1" height="5.7" fill="#8c8ca8"/><rect x="196" y="216.5" width="1" height="3.4" fill="#8c8ca8"/><rect x="197" y="216.5" width="1" height="3.2" fill="#9090b4"/><rect x="198" y="216.5" width="1" height="3.6" fill="#84848c"/><rect x="199" y="216.5" width="1" height="2.9" fill="#a898c0"/><rect x="200" y="216.5" width="1" height="3.1" fill="#a898c0"/><rect x="201" y="216.5" width="1" height="4.3" fill="#7c7c8c"/><rect x="202" y="216.5" width="1" height="5.8" fill="#a898c0"/><rect x="203" y="216.5" width="1" height="2.6" fill="#9090b4"/><rect x="204" y="216.5" width="1" height="5.1" fill="#8c8ca8"/><rect x="205" y="216.5" width="1" height="4.0" fill="#a898c0"/><rect x="207" y="216.5" width="1" height="5.2" fill="#7c7c8c"/><rect x="208" y="216.5" width="1" height="2.7" fill="#a898c0"/><rect x="209" y="216.5" width="1" height="5.6" fill="#a898c0"/><rect x="210" y="216.5" width="1" height="6.0" fill="#84848c"/><rect x="211" y="216.5" width="1" height="4.8" fill="#9c9cc4"/><rect x="213" y="216.5" width="1" height="4.7" fill="#84848c"/><rect x="214" y="216.5" width="1" height="4.7" fill="#9c9cc4"/><rect x="215" y="216.5" width="1" height="5.7" fill="#84848c"/><rect x="216" y="216.5" width="1" height="4.9" fill="#9c9cc4"/><rect x="217" y="216.5" width="1" height="4.1" fill="#9c9cc4"/><rect x="218" y="216.5" width="1" height="3.3" fill="#84848c"/><rect x="219" y="216.5" width="1" height="2.6" fill="#84848c"/><rect x="221" y="216.5" width="1" height="4.1" fill="#7c7c8c"/><rect x="222" y="216.5" width="1" height="2.7" fill="#84848c"/><rect x="223" y="216.5" width="1" height="4.1" fill="#84848c"/><rect x="225" y="216.5" width="1" height="3.2" fill="#a898c0"/><rect x="226" y="216.5" width="1" height="3.9" fill="#84848c"/><rect x="227" y="216.5" width="1" height="5.1" fill="#9090b4"/><rect x="228" y="216.5" width="1" height="3.3" fill="#8c8ca8"/><rect x="229" y="216.5" width="1" height="5.3" fill="#9c9cc4"/><rect x="230" y="216.5" width="1" height="5.3" fill="#8c8ca8"/><rect x="231" y="216.5" width="1" height="2.7" fill="#a898c0"/><rect x="232" y="216.5" width="1" height="3.7" fill="#9c9cc4"/><rect x="233" y="216.5" width="1" height="4.1" fill="#a898c0"/><rect x="234" y="216.5" width="1" height="3.2" fill="#7c7c8c"/><rect x="235" y="216.5" width="1" height="3.3" fill="#9c9cc4"/><rect x="236" y="216.5" width="1" height="5.3" fill="#7c7c8c"/><rect x="237" y="216.5" width="1" height="2.8" fill="#9090b4"/><rect x="238" y="216.5" width="1" height="5.2" fill="#8c8ca8"/><rect x="239" y="216.5" width="1" height="5.3" fill="#8c8ca8"/><rect x="240" y="216.5" width="1" height="3.1" fill="#a898c0"/><rect x="241" y="216.5" width="1" height="5.8" fill="#a898c0"/><rect x="242" y="216.5" width="1" height="2.9" fill="#a898c0"/><rect x="243" y="216.5" width="1" height="2.6" fill="#7c7c8c"/><rect x="244" y="216.5" width="1" height="5.7" fill="#7c7c8c"/><rect x="245" y="216.5" width="1" height="3.2" fill="#9c9cc4"/><rect x="246" y="216.5" width="1" height="5.9" fill="#9c9cc4"/><rect x="247" y="216.5" width="1" height="3.8" fill="#7c7c8c"/><rect x="248" y="216.5" width="1" height="3.6" fill="#9c9cc4"/><rect x="249" y="216.5" width="1" height="4.8" fill="#a898c0"/><rect x="250" y="216.5" width="1" height="3.1" fill="#9090b4"/><rect x="251" y="216.5" width="1" height="4.5" fill="#9c9cc4"/><rect x="252" y="216.5" width="1" height="2.9" fill="#a898c0"/><rect x="254" y="216.5" width="1" height="3.6" fill="#a898c0"/><rect x="255" y="216.5" width="1" height="4.9" fill="#8c8ca8"/><rect x="256" y="216.5" width="1" height="5.5" fill="#a898c0"/><rect x="257" y="216.5" width="1" height="3.0" fill="#9090b4"/><rect x="258" y="216.5" width="1" height="3.8" fill="#7c7c8c"/><rect x="259" y="216.5" width="1" height="4.1" fill="#a898c0"/><rect x="260" y="216.5" width="1" height="3.7" fill="#8c8ca8"/><rect x="261" y="216.5" width="1" height="4.2" fill="#9090b4"/><rect x="262" y="216.5" width="1" height="5.6" fill="#8c8ca8"/><rect x="263" y="216.5" width="1" height="4.9" fill="#8c8ca8"/><rect x="264" y="216.5" width="1" height="3.9" fill="#7c7c8c"/><rect x="265" y="216.5" width="1" height="3.3" fill="#84848c"/><rect x="266" y="216.5" width="1" height="4.0" fill="#a898c0"/><rect x="267" y="216.5" width="1" height="4.8" fill="#7c7c8c"/><rect x="268" y="216.5" width="1" height="4.9" fill="#9c9cc4"/><rect x="269" y="216.5" width="1" height="2.6" fill="#9090b4"/><rect x="270" y="216.5" width="1" height="5.6" fill="#84848c"/><rect x="271" y="216.5" width="1" height="3.5" fill="#7c7c8c"/><rect x="272" y="216.5" width="1" height="2.9" fill="#84848c"/><rect x="273" y="216.5" width="1" height="5.6" fill="#7c7c8c"/><rect x="274" y="216.5" width="1" height="2.6" fill="#a898c0"/><rect x="275" y="216.5" width="1" height="4.8" fill="#84848c"/><rect x="276" y="216.5" width="1" height="4.8" fill="#8c8ca8"/><rect x="277" y="216.5" width="1" height="3.8" fill="#8c8ca8"/><rect x="278" y="216.5" width="1" height="4.2" fill="#a898c0"/><rect x="279" y="216.5" width="1" height="5.9" fill="#8c8ca8"/><rect x="282" y="216.5" width="1" height="4.8" fill="#9090b4"/><rect x="283" y="216.5" width="1" height="2.7" fill="#8c8ca8"/><rect x="284" y="216.5" width="1" height="5.3" fill="#7c7c8c"/><rect x="286" y="216.5" width="1" height="3.2" fill="#84848c"/><rect x="287" y="216.5" width="1" height="4.3" fill="#9090b4"/><rect x="288" y="216.5" width="1" height="2.5" fill="#8c8ca8"/><rect x="290" y="216.5" width="1" height="5.7" fill="#9c9cc4"/><rect x="291" y="216.5" width="1" height="4.2" fill="#9c9cc4"/><rect x="292" y="216.5" width="1" height="4.1" fill="#7c7c8c"/><rect x="293" y="216.5" width="1" height="5.8" fill="#a898c0"/><rect x="294" y="216.5" width="1" height="2.9" fill="#8c8ca8"/><rect x="295" y="216.5" width="1" height="4.4" fill="#84848c"/><rect x="296" y="216.5" width="1" height="3.6" fill="#8c8ca8"/><rect x="297" y="216.5" width="1" height="2.7" fill="#8c8ca8"/><rect x="298" y="216.5" width="1" height="2.8" fill="#9c9cc4"/><rect x="299" y="216.5" width="1" height="3.7" fill="#a898c0"/><rect x="300" y="216.5" width="1" height="3.9" fill="#84848c"/><rect x="301" y="216.5" width="1" height="4.6" fill="#9090b4"/><rect x="302" y="216.5" width="1" height="4.1" fill="#8c8ca8"/><rect x="303" y="216.5" width="1" height="5.3" fill="#8c8ca8"/><rect x="304" y="216.5" width="1" height="5.9" fill="#9090b4"/><rect x="305" y="216.5" width="1" height="4.7" fill="#7c7c8c"/><rect x="307" y="216.5" width="1" height="3.9" fill="#8c8ca8"/><rect x="308" y="216.5" width="1" height="5.3" fill="#9090b4"/><rect x="309" y="216.5" width="1" height="5.0" fill="#9c9cc4"/><rect x="310" y="216.5" width="1" height="4.7" fill="#84848c"/><rect x="311" y="216.5" width="1" height="3.6" fill="#7c7c8c"/><rect x="313" y="216.5" width="1" height="3.9" fill="#8c8ca8"/><rect x="314" y="216.5" width="1" height="3.4" fill="#9090b4"/><rect x="315" y="216.5" width="1" height="3.7" fill="#7c7c8c"/><rect x="316" y="216.5" width="1" height="6.0" fill="#9c9cc4"/><rect x="317" y="216.5" width="1" height="4.5" fill="#9090b4"/><rect x="318" y="216.5" width="1" height="3.9" fill="#8c8ca8"/><rect x="319" y="216.5" width="1" height="4.6" fill="#9c9cc4"/><rect x="320" y="216.5" width="1" height="4.0" fill="#8c8ca8"/><rect x="321" y="216.5" width="1" height="4.8" fill="#a898c0"/><rect x="322" y="216.5" width="1" height="2.7" fill="#8c8ca8"/><rect x="323" y="216.5" width="1" height="3.1" fill="#8c8ca8"/><rect x="324" y="216.5" width="1" height="3.9" fill="#a898c0"/><rect x="325" y="216.5" width="1" height="5.0" fill="#8c8ca8"/><rect x="326" y="216.5" width="1" height="4.2" fill="#a898c0"/><rect x="327" y="216.5" width="1" height="4.3" fill="#9c9cc4"/><rect x="328" y="216.5" width="1" height="3.9" fill="#a898c0"/><rect x="330" y="216.5" width="1" height="3.8" fill="#84848c"/><rect x="331" y="216.5" width="1" height="4.9" fill="#84848c"/><rect x="332" y="216.5" width="1" height="4.6" fill="#9090b4"/><rect x="333" y="216.5" width="1" height="3.1" fill="#a898c0"/><rect x="334" y="216.5" width="1" height="2.7" fill="#a898c0"/><rect x="335" y="216.5" width="1" height="4.6" fill="#a898c0"/><rect x="336" y="216.5" width="1" height="4.8" fill="#7c7c8c"/><rect x="337" y="216.5" width="1" height="3.5" fill="#8c8ca8"/><rect x="338" y="216.5" width="1" height="3.9" fill="#8c8ca8"/><rect x="339" y="216.5" width="1" height="3.6" fill="#a898c0"/><rect x="340" y="216.5" width="1" height="5.3" fill="#9090b4"/><rect x="341" y="216.5" width="1" height="6.0" fill="#8c8ca8"/><rect x="342" y="216.5" width="1" height="4.7" fill="#7c7c8c"/><rect x="343" y="216.5" width="1" height="4.7" fill="#a898c0"/><rect x="344" y="216.5" width="1" height="5.1" fill="#9c9cc4"/><rect x="345" y="216.5" width="1" height="5.4" fill="#8c8ca8"/><rect x="346" y="216.5" width="1" height="4.9" fill="#a898c0"/><rect x="349" y="216.5" width="1" height="4.0" fill="#8c8ca8"/><rect x="350" y="216.5" width="1" height="5.1" fill="#7c7c8c"/><rect x="351" y="216.5" width="1" height="4.1" fill="#8c8ca8"/><rect x="352" y="216.5" width="1" height="2.8" fill="#9c9cc4"/><rect x="353" y="216.5" width="1" height="4.8" fill="#a898c0"/><rect x="354" y="216.5" width="1" height="5.0" fill="#8c8ca8"/><rect x="355" y="216.5" width="1" height="5.8" fill="#9c9cc4"/><rect x="356" y="216.5" width="1" height="2.8" fill="#9090b4"/><rect x="357" y="216.5" width="1" height="5.4" fill="#9090b4"/><rect x="358" y="216.5" width="1" height="4.2" fill="#a898c0"/><rect x="359" y="216.5" width="1" height="5.8" fill="#7c7c8c"/><rect x="360" y="216.5" width="1" height="5.7" fill="#9c9cc4"/><rect x="361" y="216.5" width="1" height="5.3" fill="#9c9cc4"/><rect x="362" y="216.5" width="1" height="2.9" fill="#7c7c8c"/><rect x="363" y="216.5" width="1" height="5.2" fill="#9090b4"/><rect x="364" y="216.5" width="1" height="3.7" fill="#8c8ca8"/><rect x="365" y="216.5" width="1" height="3.8" fill="#a898c0"/><rect x="366" y="216.5" width="1" height="3.9" fill="#9c9cc4"/><rect x="367" y="216.5" width="1" height="3.8" fill="#7c7c8c"/><rect x="368" y="216.5" width="1" height="5.0" fill="#7c7c8c"/><rect x="369" y="216.5" width="1" height="4.9" fill="#8c8ca8"/><rect x="370" y="216.5" width="1" height="3.7" fill="#a898c0"/><rect x="371" y="216.5" width="1" height="3.4" fill="#8c8ca8"/><rect x="372" y="216.5" width="1" height="3.8" fill="#a898c0"/><rect x="373" y="216.5" width="1" height="5.7" fill="#7c7c8c"/><rect x="374" y="216.5" width="1" height="5.9" fill="#9090b4"/><rect x="376" y="216.5" width="1" height="2.9" fill="#7c7c8c"/><rect x="377" y="216.5" width="1" height="2.9" fill="#84848c"/><rect x="378" y="216.5" width="1" height="2.6" fill="#9090b4"/><rect x="379" y="216.5" width="1" height="3.1" fill="#84848c"/><rect x="380" y="216.5" width="1" height="3.0" fill="#7c7c8c"/><rect x="382" y="216.5" width="1" height="2.8" fill="#a898c0"/><rect x="383" y="216.5" width="1" height="6.0" fill="#9090b4"/><rect x="384" y="216.5" width="1" height="4.6" fill="#9c9cc4"/><rect x="385" y="216.5" width="1" height="4.5" fill="#9090b4"/><rect x="386" y="216.5" width="1" height="4.9" fill="#a898c0"/><rect x="387" y="216.5" width="1" height="5.3" fill="#9c9cc4"/><rect x="388" y="216.5" width="1" height="5.9" fill="#9c9cc4"/><rect x="389" y="216.5" width="1" height="2.6" fill="#a898c0"/><rect x="390" y="216.5" width="1" height="4.8" fill="#a898c0"/><rect x="391" y="216.5" width="1" height="3.0" fill="#84848c"/><rect x="392" y="216.5" width="1" height="2.6" fill="#a898c0"/><rect x="393" y="216.5" width="1" height="3.0" fill="#84848c"/><rect x="394" y="216.5" width="1" height="5.5" fill="#84848c"/><rect x="395" y="216.5" width="1" height="5.3" fill="#84848c"/><rect x="396" y="216.5" width="1" height="5.0" fill="#9c9cc4"/><rect x="397" y="216.5" width="1" height="3.4" fill="#9c9cc4"/><rect x="398" y="216.5" width="1" height="4.8" fill="#a898c0"/><rect x="399" y="216.5" width="1" height="4.1" fill="#7c7c8c"/><rect x="400" y="216.5" width="1" height="3.3" fill="#9c9cc4"/><rect x="401" y="216.5" width="1" height="4.5" fill="#a898c0"/><rect x="402" y="216.5" width="1" height="2.8" fill="#9090b4"/><rect x="403" y="216.5" width="1" height="5.8" fill="#84848c"/><rect x="404" y="216.5" width="1" height="3.6" fill="#8c8ca8"/><rect x="405" y="216.5" width="1" height="5.9" fill="#84848c"/><rect x="406" y="216.5" width="1" height="3.6" fill="#a898c0"/><rect x="407" y="216.5" width="1" height="5.8" fill="#8c8ca8"/><rect x="408" y="216.5" width="1" height="2.6" fill="#9090b4"/><rect x="409" y="216.5" width="1" height="5.9" fill="#9c9cc4"/><rect x="412" y="216.5" width="1" height="4.3" fill="#7c7c8c"/><rect x="413" y="216.5" width="1" height="4.9" fill="#84848c"/><rect x="414" y="216.5" width="1" height="5.6" fill="#9090b4"/><rect x="415" y="216.5" width="1" height="4.2" fill="#9090b4"/><rect x="416" y="216.5" width="1" height="2.6" fill="#7c7c8c"/><rect x="418" y="216.5" width="1" height="3.0" fill="#8c8ca8"/><rect x="419" y="216.5" width="1" height="3.3" fill="#a898c0"/><rect x="420" y="216.5" width="1" height="5.9" fill="#9090b4"/><rect x="423" y="216.5" width="1" height="4.6" fill="#8c8ca8"/><rect x="424" y="216.5" width="1" height="4.5" fill="#9c9cc4"/><rect x="425" y="216.5" width="1" height="5.8" fill="#a898c0"/><rect x="426" y="216.5" width="1" height="3.0" fill="#84848c"/><rect x="428" y="216.5" width="1" height="5.5" fill="#a898c0"/><rect x="430" y="216.5" width="1" height="3.0" fill="#8c8ca8"/><rect x="431" y="216.5" width="1" height="4.3" fill="#84848c"/><rect x="432" y="216.5" width="1" height="5.3" fill="#9c9cc4"/><rect x="433" y="216.5" width="1" height="5.9" fill="#8c8ca8"/><rect x="434" y="216.5" width="1" height="5.4" fill="#7c7c8c"/><rect x="435" y="216.5" width="1" height="3.3" fill="#a898c0"/><rect x="436" y="216.5" width="1" height="3.4" fill="#9090b4"/><polygon points="50,187 50,180.8 51,180.5 52,177.5 53,178.6 54,180.7 55,177.9 56,180.4 57,180.4 58,178.5 59,180.5 60,180.9 61,177.9 62,178.3 63,179.5 64,181.3 65,177.6 66,178.2 67,178.1 68,181.0 69,178.9 70,177.3 71,177.1 72,181.3 73,180.5 74,180.2 75,180.0 76,180.9 77,181.0 78,179.3 79,180.4 80,178.3 81,178.6 82,180.2 83,180.8 84,181.1 85,179.8 86,177.3 87,181.3 88,177.9 89,180.4 90,181.4 91,180.8 92,177.4 93,178.5 94,179.2 95,180.2 96,178.8 97,181.1 98,180.9 99,178.5 100,177.6 101,180.5 102,179.0 103,181.2 104,180.6 105,177.5 106,180.3 107,181.2 108,180.2 109,180.0 110,178.6 111,180.2 112,177.7 113,180.5 114,180.7 115,179.7 116,178.3 117,180.9 118,180.1 119,180.7 120,179.3 121,180.1 122,180.3 123,178.0 124,180.7 125,180.8 126,180.7 127,180.4 128,179.2 129,180.3 130,181.1 131,181.3 132,181.1 133,181.1 134,180.2 135,177.2 136,180.0 137,180.5 138,180.9 139,181.3 140,180.1 141,180.2 142,179.8 143,181.0 144,181.4 145,180.2 146,180.1 147,181.1 148,181.2 149,181.3 150,178.8 151,177.1 152,180.3 153,181.1 154,179.1 155,180.3 156,181.0 157,180.5 158,178.0 159,180.9 160,179.4 161,180.7 162,180.0 163,180.7 164,179.6 165,179.0 166,178.2 167,180.7 168,180.9 169,178.4 170,179.3 171,181.0 172,180.8 173,181.3 174,180.4 175,181.4 176,180.3 177,177.8 178,180.4 179,178.2 180,180.9 181,180.6 182,180.1 183,181.3 184,178.4 185,181.0 186,180.2 187,180.8 188,180.6 189,181.0 190,180.1 191,178.0 192,178.1 193,177.4 194,181.2 195,177.5 196,178.6 197,181.2 198,177.4 199,180.4 200,181.0 201,180.5 202,178.1 203,177.7 204,180.6 205,181.2 206,180.5 207,181.4 208,180.6 209,178.3 210,181.3 211,180.9 212,178.1 213,180.8 214,180.5 215,180.0 216,178.6 217,176.9 218,180.3 219,180.1 220,181.1 221,180.5 222,181.0 223,181.0 224,180.4 225,180.8 226,178.5 227,180.5 228,179.0 229,180.7 230,180.2 231,181.3 232,180.4 233,178.1 234,180.6 235,181.4 236,178.5 237,177.4 238,181.0 239,178.7 240,178.9 241,179.2 242,181.2 243,179.1 244,180.1 245,178.9 246,178.0 247,178.5 248,177.9 249,180.3 250,180.4 251,181.1 252,180.9 253,177.8 254,180.2 255,180.5 256,180.6 257,181.3 258,177.5 259,180.3 260,179.3 261,180.3 262,180.1 263,180.1 264,180.8 265,178.3 266,181.4 267,180.0 268,180.0 269,177.6 270,178.9 271,180.4 272,178.9 273,179.4 274,180.4 275,177.3 276,180.7 277,180.4 278,181.1 279,180.9 280,180.7 281,180.5 282,180.7 283,180.7 284,180.2 285,177.5 286,179.4 287,181.2 288,181.0 289,181.0 290,180.6 291,181.2 292,181.3 293,176.8 294,180.8 295,180.4 296,180.7 297,180.1 298,178.1 299,178.5 300,181.3 301,181.1 302,178.7 303,181.3 304,180.3 305,178.4 306,179.4 307,179.7 308,177.8 309,178.3 310,180.4 311,181.0 312,177.2 313,179.1 314,180.2 315,179.7 316,178.6 317,180.9 318,180.1 319,180.5 320,180.4 321,180.3 322,179.7 323,181.3 324,178.5 325,180.4 326,181.0 327,180.9 328,180.5 329,178.5 330,180.5 331,176.7 332,179.2 333,180.8 334,180.3 335,180.7 336,179.3 337,177.9 338,177.9 339,181.2 340,181.0 341,178.0 342,179.1 343,180.0 344,179.4 345,181.2 346,180.0 347,179.1 348,180.3 349,178.0 350,178.2 351,178.6 352,180.1 353,179.2 354,181.2 355,180.5 356,179.4 357,178.3 358,179.6 359,180.4 360,181.1 361,179.4 362,181.2 363,180.2 364,181.0 365,180.5 366,181.3 367,180.8 368,181.4 369,180.9 370,180.2 371,177.9 372,180.1 373,177.9 374,180.3 375,181.2 376,177.7 377,180.3 378,180.3 379,179.5 380,178.3 381,181.4 382,180.1 383,180.3 384,181.0 385,181.3 386,178.7 387,181.0 388,178.1 389,178.9 390,178.2 391,180.3 392,180.8 393,180.1 394,180.1 395,181.2 396,180.8 397,178.0 398,179.0 399,178.0 400,180.2 401,179.9 402,180.9 403,181.2 404,180.8 405,180.9 406,180.4 407,180.9 408,180.0 409,180.4 410,180.7 411,177.6 412,181.0 413,179.0 414,180.7 415,180.6 416,178.5 417,180.5 418,178.9 419,179.6 420,180.6 421,181.1 422,177.3 423,177.2 424,179.3 425,181.2 426,180.1 427,180.3 428,177.6 429,177.6 430,177.6 431,180.7 432,180.0 433,180.8 434,180.4 435,180.3 436,180.1 437,181.3 437,187" fill="#87877f"/></svg><svg width="717" height="465"><path d="M49 186.5H438" stroke="#3c3cb0" stroke-width="1" opacity="0.7"/><path d="M49.5 72.5V245" stroke="#555" stroke-width="1"/><path d="M45.3 100.5H49" stroke="#333" stroke-width="1"/><text x="36.4" y="103.1" font-size="7.3" textLength="8.2" lengthAdjust="spacingAndGlyphs" fill="#333">1.5</text><path d="M45.3 129H49" stroke="#333" stroke-width="1"/><text x="41.3" y="131.6" font-size="7.3" textLength="3.3" lengthAdjust="spacingAndGlyphs" fill="#333">1</text><path d="M45.3 157.7H49" stroke="#333" stroke-width="1"/><text x="36.4" y="160.3" font-size="7.3" textLength="8.2" lengthAdjust="spacingAndGlyphs" fill="#333">0.5</text><path d="M45.3 186.7H49" stroke="#333" stroke-width="1"/><text x="41.3" y="189.3" font-size="7.3" textLength="3.3" lengthAdjust="spacingAndGlyphs" fill="#333">0</text><path d="M45.3 215.7H49" stroke="#333" stroke-width="1"/><text x="34.4" y="218.3" font-size="7.3" textLength="10.2" lengthAdjust="spacingAndGlyphs" fill="#333">-0.5</text><path d="M126.5 66V245" stroke="#55a0a8" stroke-width="0.9"/><path d="M122.0 65h9l-4.5 7.5z" fill="#1f8a7c" stroke="#145a55" stroke-width="0.6"/><text x="119.5" y="71" font-size="7" text-anchor="middle" fill="#222">1</text><path d="M204.5 66V245" stroke="#55a0a8" stroke-width="0.9"/><path d="M200.0 65h9l-4.5 7.5z" fill="#1f8a7c" stroke="#145a55" stroke-width="0.6"/><text x="211.5" y="71" font-size="7" text-anchor="middle" fill="#222">2</text><path d="M282.5 66V245" stroke="#55a0a8" stroke-width="0.9"/><path d="M278.0 65h9l-4.5 7.5z" fill="#1f8a7c" stroke="#145a55" stroke-width="0.6"/><text x="275.5" y="71" font-size="7" text-anchor="middle" fill="#222">3</text><path d="M360.5 66V245" stroke="#55a0a8" stroke-width="0.9"/><path d="M356.0 65h9l-4.5 7.5z" fill="#1f8a7c" stroke="#145a55" stroke-width="0.6"/><text x="367.5" y="71" font-size="7" text-anchor="middle" fill="#222">4</text><text transform="translate(14.4,196.2) rotate(-90)" font-size="6.8" textLength="18.5" lengthAdjust="spacingAndGlyphs" fill="#222">IN #15</text><text transform="translate(23.2,192.6) rotate(-90)" font-size="6.8" textLength="11.3" lengthAdjust="spacingAndGlyphs" fill="#222">(pA)</text></svg><div style="left:26px;top:179px;width:7.8px;height:7.5px;background:#ece9d8;border:1px solid;border-color:#fff #666 #666 #fff;"></div><div style="left:26px;top:186.5px;width:7.8px;height:7.5px;background:#ece9d8;border:1px solid;border-color:#fff #666 #666 #fff;"></div><svg width="717" height="465"><path d="M27.400 184.600h5l-2.500-4.200zM27.400 188.400h5l-2.500 4.200z" fill="#000"/></svg><div style="left:107.1px;top:129.8px;width:36.7px;height:18.4px;background:#fff;border:1px solid #555;"></div><span style="left:112.2px;top:131.6px;font-size:6.2px;line-height:7.4px;color:#222;transform-origin:0 50%;transform:scaleX(0.971);">1024.0 ms</span><span style="left:111.0px;top:139.4px;font-size:6.2px;line-height:7.4px;color:#222;transform-origin:0 50%;transform:scaleX(1.019);">-0.5107 pA</span><div style="left:182.1px;top:129.8px;width:45.5px;height:18.4px;background:#fff;border:1px solid #555;"></div><span style="left:187.2px;top:131.6px;font-size:6.2px;line-height:7.4px;color:#222;transform-origin:0 50%;transform:scaleX(1.046);">Δ1024.0 ms</span><span style="left:186.6px;top:139.4px;font-size:6.2px;line-height:7.4px;color:#222;transform-origin:0 50%;transform:scaleX(1.047);">Δ-0.0049 pA</span><div style="left:262.8px;top:129.8px;width:39.2px;height:18.4px;background:#fff;border:1px solid #555;"></div><span style="left:267.9px;top:131.6px;font-size:6.2px;line-height:7.4px;color:#222;transform-origin:0 50%;transform:scaleX(0.981);">3072.0 ms</span><span style="left:266.9px;top:139.4px;font-size:6.2px;line-height:7.4px;color:#222;transform-origin:0 50%;transform:scaleX(1.012);">-0.0107 pA</span><div style="left:338.5px;top:129.8px;width:43.5px;height:18.4px;background:#fff;border:1px solid #555;"></div><span style="left:343.0px;top:131.6px;font-size:6.2px;line-height:7.4px;color:#222;transform-origin:0 50%;transform:scaleX(1.030);">Δ1023.9 ms</span><span style="left:343.0px;top:139.4px;font-size:6.2px;line-height:7.4px;color:#222;transform-origin:0 50%;transform:scaleX(1.049);">Δ0.0439 pA</span><div style="left:364.8px;top:197.6px;width:351.8px;height:270px;background:#7a93dc;border-radius:5px 5px 0 0;"></div><div style="left:364.8px;top:197.6px;width:351.8px;height:17px;background:linear-gradient(#9db4ec,#7f9ae2 25%,#7a96df 60%,#8098e0);border-radius:5px 5px 0 0;"></div><div style="left:368.3px;top:202px;width:7.7px;height:9px;background:#dfe2ea;border:1px solid #6a6a8a;"></div><span style="left:378.0px;top:201.0px;font-size:9.2px;line-height:11.0px;font-weight:bold;color:#c4d0f0;transform-origin:0 50%;transform:scaleX(0.812);">Graph - Events:2</span><div class="wb" style="left:675px;top:201.5px;background:#4168d2;"></div><div class="wb" style="left:688px;top:201.5px;background:#4168d2;"></div><div class="wb" style="left:701px;top:201.5px;background:#c06a78;"></div><div style="left:677px;top:207.5px;width:4px;height:2px;background:#fff;"></div><div style="left:690px;top:203.5px;width:6px;height:6px;border:1px solid #fff;border-top-width:2px;"></div><svg width="717" height="465"><path d="M703.5 204l5 5M708.5 204l-5 5" stroke="#fff" stroke-width="1.4"/></svg><div style="left:366.5px;top:214.5px;width:346.5px;height:21.5px;background:#ece9d8;border-bottom:1px solid #aca899;"></div><div style="left:366.5px;top:236px;width:346.5px;height:227px;background:#fff;"></div><div class="tb" style="left:370.3px;top:217px;width:16px;height:17px;"><svg viewBox="0 0 14 15"><text x="2.200" y="10.800" font-size="10" font-weight="bold" fill="#111" textLength="9.400" lengthAdjust="spacingAndGlyphs">fx</text></svg></div><div class="tb" style="left:389px;top:217px;width:16px;height:17px;"><svg viewBox="0 0 14 15"><path d="M2.500 1.500h6.500l2.500 2.500v9.500h-9z" fill="#fdfdff" stroke="#3a3a5a" stroke-width="0.800"/><rect x="3.500" y="9.300" width="7" height="2.800" fill="#5a6ae0"/><text x="4" y="7.800" font-size="5.500" font-weight="bold" fill="#222">fx</text></svg></div><div class="tb" style="left:408.5px;top:217px;width:16px;height:17px;"><svg viewBox="0 0 14 15"><circle cx="5.800" cy="6" r="3.600" fill="#f2f6f2" stroke="#222" stroke-width="1.100"/><path d="M8.500 8.800l3.800 4" stroke="#222" stroke-width="1.900"/><path d="M4 6h3.600M5.800 4.200v3.600" stroke="#111" stroke-width="1"/></svg></div><div class="tb" style="left:425px;top:217px;width:16px;height:17px;"><svg viewBox="0 0 14 15"><path d="M2 12l3-8 3 6 2-5 2 7z" fill="none" stroke="#222" stroke-width="1"/><path d="M2 12h10M2 3v9" stroke="#d02020" stroke-width="1"/></svg></div><div class="tb" style="left:446px;top:217px;width:16px;height:17px;"><svg viewBox="0 0 14 15"><path d="M2 3v9h10" fill="none" stroke="#8030a0" stroke-width="1.2"/><path d="M5 11V4l2 5 3-6v8" fill="none" stroke="#d02040" stroke-width="1.1"/></svg></div><div class="tb" style="left:467.5px;top:217px;width:16px;height:17px;"><svg viewBox="0 0 14 15"><rect x="5" y="6" width="7" height="6" fill="#dfe4ff" stroke="#334" stroke-width="0.9"/><path d="M2 3l4 3M3 2v5" stroke="#7030a0" stroke-width="1.4"/><rect x="2" y="8" width="4" height="4" fill="#2a2a6a"/></svg></div><div class="tb" style="left:489.2px;top:217px;width:16px;height:17px;"><svg viewBox="0 0 14 15"><circle cx="7" cy="7" r="3" fill="none" stroke="#c2bfae"/><path d="M3 12h8" stroke="#c2bfae"/></svg></div><div class="tb" style="left:506px;top:217px;width:16px;height:17px;"><svg viewBox="0 0 14 15"><path d="M2 8l2 4 2-9h6" fill="none" stroke="#bdbaa8" stroke-width="1.1"/></svg></div><div class="tb" style="left:522.7px;top:217px;width:16px;height:17px;"><svg viewBox="0 0 14 15"><path d="M11 3H4l3.5 4.5L4 12h7" fill="none" stroke="#bdbaa8" stroke-width="1.2"/></svg></div><div class="tb" style="left:539.3px;top:217px;width:16px;height:17px;"><svg viewBox="0 0 14 15"><path d="M3 11l2-6 2 4 2-5 2 7" fill="none" stroke="#c8c5b4"/></svg></div><div class="tb" style="left:556px;top:217px;width:16px;height:17px;"><svg viewBox="0 0 14 15"><path d="M4 3v9M7 3v9M10 3v9M3 6h8" fill="none" stroke="#c8c5b4"/></svg></div><div class="tb" style="left:577px;top:217px;width:16px;height:17px;"><svg viewBox="0 0 14 15"><text x="1.5" y="9.5" font-size="9" font-weight="bold" style="font-family:'Liberation Serif',serif" fill="#111">A</text><path d="M1.5 11h6" stroke="#111" stroke-width="1"/><text x="8" y="12" font-size="9" font-weight="bold" style="font-family:'Liberation Serif',serif" fill="#111">c</text></svg></div><div class="tb" style="left:593.7px;top:217px;width:16px;height:17px;"><svg viewBox="0 0 14 15"><text x="2" y="9" font-size="9.5" font-weight="bold" style="font-family:'Liberation Serif',serif" fill="#111">x</text><path d="M1.5 11h6" stroke="#111" stroke-width="1"/><text x="8" y="12" font-size="9" font-weight="bold" style="font-family:'Liberation Serif',serif" fill="#111">c</text></svg></div><div style="left:614px;top:217px;width:1px;height:17px;background:#aca899;"></div><svg width="717" height="465"><rect x="384.5" y="255.5" width="328.0" height="186.5" fill="#fffffc" stroke="#8c8c8c" stroke-width="0.9"/><path d="M384.5 442.0H712.5M384.5 255.5H712.5" stroke="#444" stroke-width="1"/><path d="M399.6 255.5V442.0" stroke="#f2f2e2" stroke-width="1" stroke-dasharray="1 1"/><path d="M458.2 255.5V442.0" stroke="#f2f2e2" stroke-width="1" stroke-dasharray="1 1"/><path d="M516.8 255.5V442.0" stroke="#f2f2e2" stroke-width="1" stroke-dasharray="1 1"/><path d="M575.4 255.5V442.0" stroke="#f2f2e2" stroke-width="1" stroke-dasharray="1 1"/><path d="M634.0 255.5V442.0" stroke="#f2f2e2" stroke-width="1" stroke-dasharray="1 1"/><path d="M692.6 255.5V442.0" stroke="#f2f2e2" stroke-width="1" stroke-dasharray="1 1"/><path d="M384.5 401.4H712.5" stroke="#f2f2e2" stroke-width="1" stroke-dasharray="1 1"/><path d="M384.5 360.8H712.5" stroke="#f2f2e2" stroke-width="1" stroke-dasharray="1 1"/><path d="M384.5 320.2H712.5" stroke="#f2f2e2" stroke-width="1" stroke-dasharray="1 1"/><path d="M384.5 279.6H712.5" stroke="#f2f2e2" stroke-width="1" stroke-dasharray="1 1"/><text x="505.0" y="244.0" font-size="8.2" textLength="86.0" lengthAdjust="spacingAndGlyphs" fill="#222">1: Dwell Time Histogram</text><text x="533.4" y="252.6" font-size="7.2" textLength="28.6" lengthAdjust="spacingAndGlyphs" fill="#222">(Level 0)</text><path d="M399.6 442.0v3" stroke="#333" stroke-width="1"/><text x="398.6" y="451.8" font-size="7.4" text-anchor="middle" fill="#222">-1</text><path d="M458.2 442.0v3" stroke="#333" stroke-width="1"/><text x="457.2" y="451.8" font-size="7.4" text-anchor="middle" fill="#222">-0.5</text><path d="M516.8 442.0v3" stroke="#333" stroke-width="1"/><text x="515.8" y="451.8" font-size="7.4" text-anchor="middle" fill="#222">0</text><path d="M575.4 442.0v3" stroke="#333" stroke-width="1"/><text x="574.4" y="451.8" font-size="7.4" text-anchor="middle" fill="#222">0.5</text><path d="M634.0 442.0v3" stroke="#333" stroke-width="1"/><text x="633.0" y="451.8" font-size="7.4" text-anchor="middle" fill="#222">1</text><path d="M692.6 442.0v3" stroke="#333" stroke-width="1"/><text x="691.6" y="451.8" font-size="7.4" text-anchor="middle" fill="#222">1.5</text><path d="M428.9 442.0v2" stroke="#555" stroke-width="0.8"/><path d="M487.5 442.0v2" stroke="#555" stroke-width="0.8"/><path d="M546.1 442.0v2" stroke="#555" stroke-width="0.8"/><path d="M604.7 442.0v2" stroke="#555" stroke-width="0.8"/><path d="M663.3 442.0v2" stroke="#555" stroke-width="0.8"/><text x="379" y="439.6" font-size="7.4" text-anchor="end" fill="#222">0</text><path d="M381.5 401.5h3" stroke="#333" stroke-width="1"/><text x="379" y="404.2" font-size="7.4" text-anchor="end" fill="#222">2</text><path d="M381.5 361.2h3" stroke="#333" stroke-width="1"/><text x="379" y="363.9" font-size="7.4" text-anchor="end" fill="#222">4</text><path d="M381.5 320.8h3" stroke="#333" stroke-width="1"/><text x="379" y="323.5" font-size="7.4" text-anchor="end" fill="#222">6</text><path d="M381.5 280.5h3" stroke="#333" stroke-width="1"/><text x="379" y="283.2" font-size="7.4" text-anchor="end" fill="#222">8</text><text x="514.0" y="461.0" font-size="7.6" textLength="67.0" lengthAdjust="spacingAndGlyphs" fill="#222">Log Dwell Time (ms)</text><text transform="translate(373.5,348) rotate(-90)" font-size="7.4" text-anchor="middle" fill="#222">Square Root Count (N)</text><path d="M392.4 442.0V263.4H400.2V442.0M423.6 442.0V296.2H431.4V442.0M447.1 442.0V307.4H454.9V442.0M462.7 442.0V317.2H470.5V332.8H478.3V345.4H486.1V351.7H493.9V367.9H501.7V371.6H509.5V327.7H517.4V363.4H525.2V342.9H533.0V345.4H540.8V355.9H548.6V351.7H556.4V358.4H564.2V329.7H572.0V363.4H579.8V345.4H587.6V353.5H595.5V349.2H603.3V343.3H611.1V332.8H618.9V329.7H626.7V334.0H634.5V340.9H642.3V339.1H650.1V337.3H657.9V361.2H665.7V355.9H673.5V362.8H681.4V396.3H689.2V391.9H697.0V406.9H704.8V442.0V442.0" fill="none" stroke="#5c5ce8" stroke-width="0.95"/><path d="M395.7 280.0 L397.0 300.0 L399.0 330.0 L401.5 360.0 L404.0 382.0 L407.0 396.0 L410.0 403.5 L415.5 407.0 L421.0 405.5 L428.0 402.0 L440.0 394.0 L455.0 382.0 L470.0 370.0 L485.0 359.0 L497.0 351.0 L508.0 345.0 L518.5 342.3 L530.0 342.5 L540.0 345.0 L550.0 348.5 L560.0 353.0 L570.0 357.5 L576.0 358.5 L585.0 357.0 L595.0 353.0 L605.0 347.5 L615.0 341.0 L625.0 335.5 L633.0 333.0 L641.0 333.0 L648.0 335.0 L655.0 339.5 L663.0 348.0 L672.0 361.0 L681.0 377.0 L690.0 394.0 L696.0 405.0 L700.0 412.0" fill="none" stroke="#8c459c" stroke-width="0.9" stroke-linejoin="round"/><text x="436.9" y="282.6" font-size="13.3" textLength="243.1" lengthAdjust="spacingAndGlyphs" fill="#0a0ae0" font-weight="bold">3-term log exponential probability fit</text><path d="M535.5 287L599 341" stroke="#0a0ae0" stroke-width="2.2"/><path d="M605.2 346.4L594.3 344.6L602.8 337.2z" fill="#0a0ae0"/></svg><div style="left:4px;top:222.7px;width:360.5px;height:245px;background:#0a53dc;border-radius:5px 5px 0 0;"></div><div style="left:4px;top:222.7px;width:360.5px;height:16px;background:linear-gradient(#2f7bf0,#0a5be6 22%,#0353de 60%,#0a5ce8);border-radius:5px 5px 0 0;"></div><span style="left:8.3px;top:226.3px;font-size:9.2px;line-height:11.0px;font-weight:bold;color:#fff;transform-origin:0 50%;transform:scaleX(0.797);">Fitting Results</span><div class="wb" style="left:349px;top:226px;width:11px;height:11px;background:#d8563c;border-color:#fff;"></div><svg width="717" height="465"><path d="M352 229l5 5M357 229l-5 5" stroke="#fff" stroke-width="1.5"/></svg><div style="left:7px;top:238.600px;width:355.0px;height:224.700px;background:#ece9d8;"></div><div style="left:11.5px;top:252px;width:348px;height:172px;background:#ece9d8;border:1px solid;border-color:#f9f8f2 #8d8a78 #77756a #f9f8f2;"></div><div style="left:12.5px;top:241.5px;width:38px;height:11.5px;background:#ece9d8;border:1px solid;border-color:#fff #8d8a78 #ece9d8 #fff;"></div><div style="left:50.5px;top:243.5px;width:30px;height:9px;border-right:1px solid #8d8a78;border-top:1px solid #fff;"></div><span style="left:15.9px;top:242.6px;font-size:7.4px;line-height:8.9px;color:#222;transform-origin:0 50%;transform:scaleX(0.803);">Parameters</span><span style="left:52.9px;top:243.6px;font-size:7.4px;line-height:8.9px;color:#222;transform-origin:0 50%;transform:scaleX(0.807);">Statistics</span><span style="left:42.3px;top:269.1px;font-size:7.4px;line-height:8.9px;color:#222;transform-origin:0 50%;transform:scaleX(0.808);">All parameters were forced positive by default.</span><span style="left:42.3px;top:279.6px;font-size:7.4px;line-height:8.9px;color:#222;transform-origin:0 50%;transform:scaleX(0.768);">P ± S.E.</span><span style="left:122.6px;top:279.6px;font-size:7.4px;line-height:8.9px;color:#222;transform-origin:0 50%;transform:scaleX(0.761);">tau ± S.E.</span><span style="left:16.4px;top:291.6px;font-size:7.4px;line-height:8.9px;color:#222;transform-origin:0 50%;transform:scaleX(0.778);">Term 1</span><div class="fld" style="left:42px;top:291.0px;width:36.5px;height:10.5px;"></div><span style="left:44.2px;top:291.8px;font-size:7.4px;line-height:8.9px;color:#1c1c1c;transform-origin:0 50%;transform:scaleX(0.810);">19796.9</span><div class="fld" style="left:81px;top:291.0px;width:36.5px;height:10.5px;"></div><span style="left:83.2px;top:291.8px;font-size:7.4px;line-height:8.9px;color:#1c1c1c;transform-origin:0 50%;transform:scaleX(0.810);">116042</span><div class="fld" style="left:123px;top:291.0px;width:36.5px;height:10.5px;"></div><span style="left:125.2px;top:291.8px;font-size:7.4px;line-height:8.9px;color:#1c1c1c;transform-origin:0 50%;transform:scaleX(0.810);">0.0089859</span><div class="fld" style="left:162px;top:291.0px;width:36.5px;height:10.5px;"></div><span style="left:164.2px;top:291.8px;font-size:7.4px;line-height:8.9px;color:#1c1c1c;transform-origin:0 50%;transform:scaleX(0.810);">0.625007</span><div class="fld" style="left:202.5px;top:291.0px;width:36.5px;height:10.5px;"></div><span style="left:204.7px;top:291.8px;font-size:7.4px;line-height:8.9px;color:#b9b6a5;transform-origin:0 50%;transform:scaleX(0.810);">0</span><div class="fld" style="left:242px;top:291.0px;width:36.5px;height:10.5px;"></div><span style="left:244.2px;top:291.8px;font-size:7.4px;line-height:8.9px;color:#b9b6a5;transform-origin:0 50%;transform:scaleX(0.810);">0</span><div class="fld" style="left:283px;top:291.0px;width:36.5px;height:10.5px;"></div><span style="left:285.2px;top:291.8px;font-size:7.4px;line-height:8.9px;color:#b9b6a5;transform-origin:0 50%;transform:scaleX(0.810);">0</span><div class="fld" style="left:322px;top:291.0px;width:36.5px;height:10.5px;"></div><span style="left:324.2px;top:291.8px;font-size:7.4px;line-height:8.9px;color:#b9b6a5;transform-origin:0 50%;transform:scaleX(0.810);">0</span><span style="left:16.4px;top:305.6px;font-size:7.4px;line-height:8.9px;color:#222;transform-origin:0 50%;transform:scaleX(0.778);">Term 2</span><div class="fld" style="left:42px;top:305.0px;width:36.5px;height:10.5px;"></div><span style="left:44.2px;top:305.8px;font-size:7.4px;line-height:8.9px;color:#1c1c1c;transform-origin:0 50%;transform:scaleX(0.810);">10.0355</span><div class="fld" style="left:81px;top:305.0px;width:36.5px;height:10.5px;"></div><span style="left:83.2px;top:305.8px;font-size:7.4px;line-height:8.9px;color:#1c1c1c;transform-origin:0 50%;transform:scaleX(0.810);">1.43116</span><div class="fld" style="left:123px;top:305.0px;width:36.5px;height:10.5px;"></div><span style="left:125.2px;top:305.8px;font-size:7.4px;line-height:8.9px;color:#1c1c1c;transform-origin:0 50%;transform:scaleX(0.810);">0.80861</span><div class="fld" style="left:162px;top:305.0px;width:36.5px;height:10.5px;"></div><span style="left:164.2px;top:305.8px;font-size:7.4px;line-height:8.9px;color:#1c1c1c;transform-origin:0 50%;transform:scaleX(0.810);">0.211081</span><div class="fld" style="left:202.5px;top:305.0px;width:36.5px;height:10.5px;"></div><span style="left:204.7px;top:305.8px;font-size:7.4px;line-height:8.9px;color:#b9b6a5;transform-origin:0 50%;transform:scaleX(0.810);">0</span><div class="fld" style="left:242px;top:305.0px;width:36.5px;height:10.5px;"></div><span style="left:244.2px;top:305.8px;font-size:7.4px;line-height:8.9px;color:#b9b6a5;transform-origin:0 50%;transform:scaleX(0.810);">0</span><div class="fld" style="left:283px;top:305.0px;width:36.5px;height:10.5px;"></div><span style="left:285.2px;top:305.8px;font-size:7.4px;line-height:8.9px;color:#b9b6a5;transform-origin:0 50%;transform:scaleX(0.810);">0</span><div class="fld" style="left:322px;top:305.0px;width:36.5px;height:10.5px;"></div><span style="left:324.2px;top:305.8px;font-size:7.4px;line-height:8.9px;color:#b9b6a5;transform-origin:0 50%;transform:scaleX(0.810);">0</span><span style="left:16.4px;top:319.6px;font-size:7.4px;line-height:8.9px;color:#222;transform-origin:0 50%;transform:scaleX(0.778);">Term 3</span><div class="fld" style="left:42px;top:319.0px;width:36.5px;height:10.5px;"></div><span style="left:44.2px;top:319.8px;font-size:7.4px;line-height:8.9px;color:#1c1c1c;transform-origin:0 50%;transform:scaleX(0.810);">14.6635</span><div class="fld" style="left:81px;top:319.0px;width:36.5px;height:10.5px;"></div><span style="left:83.2px;top:319.8px;font-size:7.4px;line-height:8.9px;color:#1c1c1c;transform-origin:0 50%;transform:scaleX(0.810);">1.40922</span><div class="fld" style="left:123px;top:319.0px;width:36.5px;height:10.5px;"></div><span style="left:125.2px;top:319.8px;font-size:7.4px;line-height:8.9px;color:#1c1c1c;transform-origin:0 50%;transform:scaleX(0.810);">10.2698</span><div class="fld" style="left:162px;top:319.0px;width:36.5px;height:10.5px;"></div><span style="left:164.2px;top:319.8px;font-size:7.4px;line-height:8.9px;color:#1c1c1c;transform-origin:0 50%;transform:scaleX(0.810);">0.14673</span><div class="fld" style="left:202.5px;top:319.0px;width:36.5px;height:10.5px;"></div><span style="left:204.7px;top:319.8px;font-size:7.4px;line-height:8.9px;color:#b9b6a5;transform-origin:0 50%;transform:scaleX(0.810);">0</span><div class="fld" style="left:242px;top:319.0px;width:36.5px;height:10.5px;"></div><span style="left:244.2px;top:319.8px;font-size:7.4px;line-height:8.9px;color:#b9b6a5;transform-origin:0 50%;transform:scaleX(0.810);">0</span><div class="fld" style="left:283px;top:319.0px;width:36.5px;height:10.5px;"></div><span style="left:285.2px;top:319.8px;font-size:7.4px;line-height:8.9px;color:#b9b6a5;transform-origin:0 50%;transform:scaleX(0.810);">0</span><div class="fld" style="left:322px;top:319.0px;width:36.5px;height:10.5px;"></div><span style="left:324.2px;top:319.8px;font-size:7.4px;line-height:8.9px;color:#b9b6a5;transform-origin:0 50%;transform:scaleX(0.810);">0</span><div class="fld" style="left:42px;top:333.0px;width:36.5px;height:10.5px;"></div><span style="left:44.2px;top:333.8px;font-size:7.4px;line-height:8.9px;color:#b9b6a5;transform-origin:0 50%;transform:scaleX(0.810);">0</span><div class="fld" style="left:81px;top:333.0px;width:36.5px;height:10.5px;"></div><span style="left:83.2px;top:333.8px;font-size:7.4px;line-height:8.9px;color:#b9b6a5;transform-origin:0 50%;transform:scaleX(0.810);">0</span><div class="fld" style="left:123px;top:333.0px;width:36.5px;height:10.5px;"></div><span style="left:125.2px;top:333.8px;font-size:7.4px;line-height:8.9px;color:#b9b6a5;transform-origin:0 50%;transform:scaleX(0.810);">0</span><div class="fld" style="left:162px;top:333.0px;width:36.5px;height:10.5px;"></div><span style="left:164.2px;top:333.8px;font-size:7.4px;line-height:8.9px;color:#b9b6a5;transform-origin:0 50%;transform:scaleX(0.810);">0</span><div class="fld" style="left:202.5px;top:333.0px;width:36.5px;height:10.5px;"></div><span style="left:204.7px;top:333.8px;font-size:7.4px;line-height:8.9px;color:#b9b6a5;transform-origin:0 50%;transform:scaleX(0.810);">0</span><div class="fld" style="left:242px;top:333.0px;width:36.5px;height:10.5px;"></div><span style="left:244.2px;top:333.8px;font-size:7.4px;line-height:8.9px;color:#b9b6a5;transform-origin:0 50%;transform:scaleX(0.810);">0</span><div class="fld" style="left:283px;top:333.0px;width:36.5px;height:10.5px;"></div><span style="left:285.2px;top:333.8px;font-size:7.4px;line-height:8.9px;color:#b9b6a5;transform-origin:0 50%;transform:scaleX(0.810);">0</span><div class="fld" style="left:322px;top:333.0px;width:36.5px;height:10.5px;"></div><span style="left:324.2px;top:333.8px;font-size:7.4px;line-height:8.9px;color:#b9b6a5;transform-origin:0 50%;transform:scaleX(0.810);">0</span><div class="fld" style="left:42px;top:347.0px;width:36.5px;height:10.5px;"></div><span style="left:44.2px;top:347.8px;font-size:7.4px;line-height:8.9px;color:#b9b6a5;transform-origin:0 50%;transform:scaleX(0.810);">0</span><div class="fld" style="left:81px;top:347.0px;width:36.5px;height:10.5px;"></div><span style="left:83.2px;top:347.8px;font-size:7.4px;line-height:8.9px;color:#b9b6a5;transform-origin:0 50%;transform:scaleX(0.810);">0</span><div class="fld" style="left:123px;top:347.0px;width:36.5px;height:10.5px;"></div><span style="left:125.2px;top:347.8px;font-size:7.4px;line-height:8.9px;color:#b9b6a5;transform-origin:0 50%;transform:scaleX(0.810);">0</span><div class="fld" style="left:162px;top:347.0px;width:36.5px;height:10.5px;"></div><span style="left:164.2px;top:347.8px;font-size:7.4px;line-height:8.9px;color:#b9b6a5;transform-origin:0 50%;transform:scaleX(0.810);">0</span><div class="fld" style="left:202.5px;top:347.0px;width:36.5px;height:10.5px;"></div><span style="left:204.7px;top:347.8px;font-size:7.4px;line-height:8.9px;color:#b9b6a5;transform-origin:0 50%;transform:scaleX(0.810);">0</span><div class="fld" style="left:242px;top:347.0px;width:36.5px;height:10.5px;"></div><span style="left:244.2px;top:347.8px;font-size:7.4px;line-height:8.9px;color:#b9b6a5;transform-origin:0 50%;transform:scaleX(0.810);">0</span><div class="fld" style="left:283px;top:347.0px;width:36.5px;height:10.5px;"></div><span style="left:285.2px;top:347.8px;font-size:7.4px;line-height:8.9px;color:#b9b6a5;transform-origin:0 50%;transform:scaleX(0.810);">0</span><div class="fld" style="left:322px;top:347.0px;width:36.5px;height:10.5px;"></div><span style="left:324.2px;top:347.8px;font-size:7.4px;line-height:8.9px;color:#b9b6a5;transform-origin:0 50%;transform:scaleX(0.810);">0</span><div class="fld" style="left:42px;top:361.0px;width:36.5px;height:10.5px;"></div><span style="left:44.2px;top:361.8px;font-size:7.4px;line-height:8.9px;color:#b9b6a5;transform-origin:0 50%;transform:scaleX(0.810);">0</span><div class="fld" style="left:81px;top:361.0px;width:36.5px;height:10.5px;"></div><span style="left:83.2px;top:361.8px;font-size:7.4px;line-height:8.9px;color:#b9b6a5;transform-origin:0 50%;transform:scaleX(0.810);">0</span><div class="fld" style="left:123px;top:361.0px;width:36.5px;height:10.5px;"></div><span style="left:125.2px;top:361.8px;font-size:7.4px;line-height:8.9px;color:#b9b6a5;transform-origin:0 50%;transform:scaleX(0.810);">0</span><div class="fld" style="left:162px;top:361.0px;width:36.5px;height:10.5px;"></div><span style="left:164.2px;top:361.8px;font-size:7.4px;line-height:8.9px;color:#b9b6a5;transform-origin:0 50%;transform:scaleX(0.810);">0</span><div class="fld" style="left:202.5px;top:361.0px;width:36.5px;height:10.5px;"></div><span style="left:204.7px;top:361.8px;font-size:7.4px;line-height:8.9px;color:#b9b6a5;transform-origin:0 50%;transform:scaleX(0.810);">0</span><div class="fld" style="left:242px;top:361.0px;width:36.5px;height:10.5px;"></div><span style="left:244.2px;top:361.8px;font-size:7.4px;line-height:8.9px;color:#b9b6a5;transform-origin:0 50%;transform:scaleX(0.810);">0</span><div class="fld" style="left:283px;top:361.0px;width:36.5px;height:10.5px;"></div><span style="left:285.2px;top:361.8px;font-size:7.4px;line-height:8.9px;color:#b9b6a5;transform-origin:0 50%;transform:scaleX(0.810);">0</span><div class="fld" style="left:322px;top:361.0px;width:36.5px;height:10.5px;"></div><span style="left:324.2px;top:361.8px;font-size:7.4px;line-height:8.9px;color:#b9b6a5;transform-origin:0 50%;transform:scaleX(0.810);">0</span><span style="left:161.5px;top:376.2px;font-size:7.4px;line-height:8.9px;color:#222;transform-origin:0 50%;transform:scaleX(0.816);">Y(x=o) Intercept = 4.89877</span><div style="left:40px;top:379.8px;width:7px;height:7px;border-radius:50%;background:#fff;border:1px solid;border-color:#777 #ddd #ddd #777;"></div><div style="left:42.2px;top:382.0px;width:2.6px;height:2.6px;border-radius:50%;background:#111;"></div><span style="left:50.7px;top:379.2px;font-size:7.4px;line-height:8.9px;color:#222;transform-origin:0 50%;transform:scaleX(0.819);">Absolute proportions</span><div style="left:40px;top:389.6px;width:7px;height:7px;border-radius:50%;background:#fff;border:1px solid;border-color:#777 #ddd #ddd #777;"></div><span style="left:50.7px;top:389.0px;font-size:7.4px;line-height:8.9px;color:#222;transform-origin:0 50%;transform:scaleX(0.801);">Normalized proportions</span><div style="left:9px;top:431px;width:103px;height:30px;border:1px solid #d2cfbe;box-shadow:0.5px 0.5px 0 #fff;"></div><div style="left:12.5px;top:427px;width:26px;height:8px;background:#ece9d8;"></div><span style="left:13.9px;top:426.9px;font-size:7.4px;line-height:8.9px;color:#222;transform-origin:0 50%;transform:scaleX(0.870);">Copy To</span><div class="btn" style="left:16px;top:440.5px;width:43px;height:13px;"></div><span style="left:23.9px;top:442.6px;font-size:7.4px;line-height:8.9px;color:#222;transform-origin:0 50%;transform:scaleX(0.835);">Lab Book</span><div class="btn" style="left:62.5px;top:440.5px;width:43.5px;height:13px;"></div><span style="left:71.5px;top:442.6px;font-size:7.4px;line-height:8.9px;color:#222;transform-origin:0 50%;transform:scaleX(0.808);">Clipboard</span><div style="left:119px;top:431px;width:88px;height:30px;border:1px solid #d2cfbe;box-shadow:0.5px 0.5px 0 #fff;"></div><div style="left:123px;top:427px;width:19px;height:8px;background:#ece9d8;"></div><span style="left:124.3px;top:426.9px;font-size:7.4px;line-height:8.9px;color:#222;transform-origin:0 50%;transform:scaleX(0.812);">Select</span><span style="left:124.3px;top:436.1px;font-size:7.4px;line-height:8.9px;color:#c2bfae;transform-origin:0 50%;transform:scaleX(0.803);">Trace number:</span><span style="left:124.3px;top:448.8px;font-size:7.4px;line-height:8.9px;color:#222;transform-origin:0 50%;transform:scaleX(0.808);">Model number:</span><div class="fld" style="left:172.5px;top:435px;width:22.5px;height:10px;"></div><span style="left:175.0px;top:435.8px;font-size:7.4px;line-height:8.9px;color:#c2bfae;transform-origin:0 50%;transform:scaleX(0.810);">1</span><div class="fld" style="left:172.5px;top:447.5px;width:22.5px;height:10.5px;background:#fff;border-color:#55534a #ddd #ddd #55534a;"></div><span style="left:175.0px;top:448.6px;font-size:7.4px;line-height:8.9px;color:#111;transform-origin:0 50%;transform:scaleX(0.810);">3</span><div style="left:195.5px;top:435px;width:7.5px;height:5.2px;background:#ece9d8;border:1px solid;border-color:#fff #777 #777 #fff;"></div><div style="left:195.5px;top:440.2px;width:7.5px;height:5.2px;background:#ece9d8;border:1px solid;border-color:#fff #777 #777 #fff;"></div><svg width="717" height="465"><path d="M197.5 438.9h3.6l-1.8-2.6zM197.5 441.6h3.6l-1.8 2.6z" fill="#b8b5a4"/></svg><div style="left:195.5px;top:447.5px;width:7.5px;height:5.2px;background:#ece9d8;border:1px solid;border-color:#fff #777 #777 #fff;"></div><div style="left:195.5px;top:452.7px;width:7.5px;height:5.2px;background:#ece9d8;border:1px solid;border-color:#fff #777 #777 #fff;"></div><svg width="717" height="465"><path d="M197.5 451.4h3.6l-1.8-2.6zM197.5 454.1h3.6l-1.8 2.6z" fill="#111"/></svg><div class="btn" style="left:267px;top:447px;width:41px;height:12px;border-color:#fff #444 #444 #fff;box-shadow:0 0 0 1px #222;"></div><span style="left:279.5px;top:448.6px;font-size:7.4px;line-height:8.9px;color:#222;transform-origin:0 50%;transform:scaleX(0.810);">Close</span><div class="btn" style="left:316.5px;top:446.5px;width:41px;height:13px;"></div><span style="left:330.5px;top:448.6px;font-size:7.4px;line-height:8.9px;color:#222;transform-origin:0 50%;transform:scaleX(0.810);">Help</span><svg width="717" height="465"><path d="M536 94.3L167.500 277.800" stroke="#9acd1e" stroke-width="2.3"/><path d="M158.8 282.4L166.3 275.3L171.6 283z" fill="#9acd1e"/></svg><div style="left:539.8px;top:54.5px;width:110px;height:82.2px;background:#0404f8;border:1px solid #101040;border-radius:12px;"></div><span style="left:550.9px;top:62.8px;font-size:14.1px;line-height:16.9px;font-weight:bold;color:#fff;transform-origin:0 50%;transform:scaleX(1.000);">Tau 1 = 0.09</span><span style="left:550.9px;top:88.0px;font-size:14.1px;line-height:16.9px;font-weight:bold;color:#fff;transform-origin:0 50%;transform:scaleX(1.000);">Tau 2 = 0.81</span><span style="left:550.9px;top:113.3px;font-size:14.1px;line-height:16.9px;font-weight:bold;color:#fff;transform-origin:0 50%;transform:scaleX(1.000);">Tau 3 = 10.27</span></div></body></html>
